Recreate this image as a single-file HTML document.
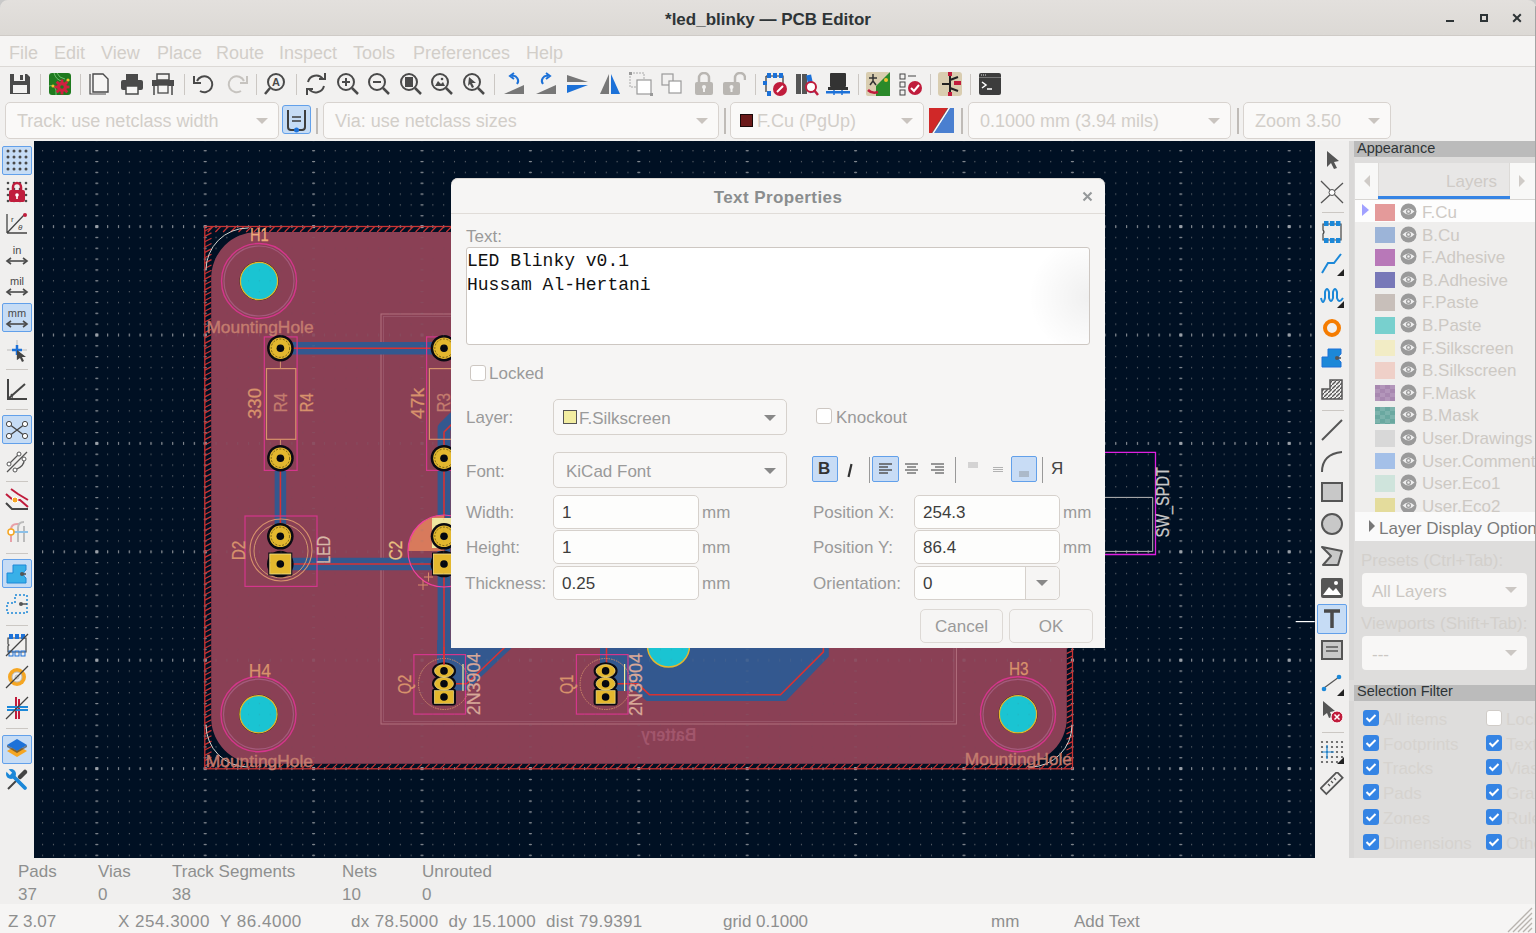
<!DOCTYPE html>
<html><head><meta charset="utf-8">
<style>
*{margin:0;padding:0;box-sizing:border-box}
html,body{width:1536px;height:933px;overflow:hidden}
body{background:#f2f1f0;font-family:"Liberation Sans",sans-serif;position:relative}
.a{position:absolute}
#title{left:0;top:0;width:1536px;height:36px;background:linear-gradient(#e3e0dd,#dcd9d5);border-bottom:1px solid #cfcbc7}
#title .t{left:0;width:1536px;top:10px;text-align:center;font-weight:bold;font-size:17px;color:#2e3436}
#menu{left:0;top:36px;width:1536px;height:31px;background:#f6f5f4;border-bottom:1px solid #dcd9d6}
#menu span{position:absolute;top:7px;font-size:18px;color:#d2cec9}
.cb{position:absolute;background:#faf9f8;border:1px solid #d8d3cf;border-radius:5px}
.cb .tx{position:absolute;left:11px;top:8px;font-size:18px;color:#d2cec9;white-space:nowrap}
.cb .ar{position:absolute;top:15px;width:0;height:0;border-left:6px solid transparent;border-right:6px solid transparent;border-top:6px solid #c9c4bf}
.sep{position:absolute;width:1.5px;background:#bfbbb7}
.hsep{position:absolute;height:1px;background:#cfcbc7}
.ib{position:absolute}
.hl{position:absolute;background:#c6dcf5;border:1px solid #62a0ea;border-radius:3px}
#ltb{left:0;top:141px;width:34px;height:717px;background:#f0efee}
#rtb{left:1315px;top:141px;width:34px;height:717px;background:#f0efee}
#status{left:0;top:858px;width:1536px;height:46px;background:#f0efee}
#status2{left:0;top:904px;width:1536px;height:29px;background:#f6f5f4}
.st{position:absolute;font-size:17px;color:#8e8f8f;white-space:nowrap}
</style></head><body>

<div id="title" class="a"><div class="t a">*led_blinky — PCB Editor</div>
<div class="a" style="left:1446px;top:19.7px;width:8px;height:2px;background:#2e3436"></div>
<div class="a" style="left:1480px;top:14px;width:8px;height:7.5px;border:2px solid #2e3436"></div>
<svg class="a" style="left:1512px;top:13px" width="10" height="10"><path d="M1.2 1.2 L8.8 8.8 M8.8 1.2 L1.2 8.8" stroke="#2e3436" stroke-width="2"/></svg>
</div>
<div id="menu" class="a">
<span style="left:9px">File</span><span style="left:54px">Edit</span><span style="left:101px">View</span><span style="left:157px">Place</span><span style="left:216px">Route</span><span style="left:279px">Inspect</span><span style="left:353px">Tools</span><span style="left:413px">Preferences</span><span style="left:526px">Help</span>
</div>
<div class="cb" style="left:5px;top:102px;width:274px;height:37px"><div class="tx">Track: use netclass width</div><div class="ar" style="left:250px"></div></div>
<div class="cb" style="left:323px;top:102px;width:396px;height:37px"><div class="tx">Via: use netclass sizes</div><div class="ar" style="left:372px"></div></div>
<div class="cb" style="left:730px;top:102px;width:194px;height:37px"><div class="tx" style="left:26px">F.Cu (PgUp)</div><div class="ar" style="left:170px"></div>
<div class="a" style="left:9px;top:11px;width:13px;height:13px;background:#6b1a1a;border:1px solid #1a0a0a"></div></div>
<div class="cb" style="left:968px;top:102px;width:263px;height:37px"><div class="tx">0.1000 mm (3.94 mils)</div><div class="ar" style="left:239px"></div></div>
<div class="cb" style="left:1243px;top:102px;width:148px;height:37px"><div class="tx">Zoom 3.50</div><div class="ar" style="left:124px"></div></div>
<div class="sep" style="left:316px;top:108px;height:26px"></div>
<div class="sep" style="left:724px;top:108px;height:26px"></div>
<div class="sep" style="left:961px;top:108px;height:26px"></div>
<div class="sep" style="left:1237px;top:108px;height:26px"></div>
<div class="hl" style="left:282px;top:105px;width:29px;height:29px"></div>
<svg class="a" style="left:282px;top:105px" width="29" height="29"><path d="M6 5 V22 Q6 25 9 25 H20 Q23 25 23 22 V5" fill="none" stroke="#3d3d3d" stroke-width="2"/><path d="M10 12 H19 M10 16 H19" stroke="#3d3d3d" stroke-width="1.5"/><circle cx="14.5" cy="25" r="2.5" fill="#1c71d8"/></svg>
<svg class="a" style="left:929px;top:108px" width="25" height="25"><path d="M0 0 H19 L3 25 H0 Z" fill="#d02828"/><path d="M21 0 H25 V25 H5 Z" fill="#4a7fd0"/><path d="M20 0 L4 25" stroke="#fff" stroke-width="1.2"/><path d="M19 0 L3 25" stroke="#333" stroke-width="0.5"/></svg>

<svg class="a" style="left:8px;top:72px" width="24" height="24" viewBox="0 0 24 24"><path d="M2 2 H19 L22 5 V22 H2 Z" fill="#4a4a4a"/><rect x="6" y="2" width="11" height="7" fill="#f2f1f0"/><rect x="12" y="3" width="3" height="5" fill="#4a4a4a"/><rect x="5" y="13" width="14" height="8" fill="#f2f1f0"/></svg>
<div class="a" style="left:40px;top:74px;width:1px;height:21px;background:#cbc7c3"></div>
<svg class="a" style="left:48px;top:72px" width="24" height="24" viewBox="0 0 24 24"><rect x="1" y="1" width="22" height="22" rx="3" fill="#1f7a1f"/><path d="M6 1 Q8 8 14 9 M9 1 Q11 6 17 7 M1 14 Q6 12 8 18 V23" stroke="#6cbf6c" stroke-width="1" fill="none"/><circle cx="5" cy="14" r="1.6" fill="#f0c030"/><circle cx="20" cy="8" r="1.6" fill="#f0c030"/><rect x="12.6" y="7.5" width="2.8" height="4" fill="#d02040" transform="rotate(0 14 15)"/><rect x="12.6" y="7.5" width="2.8" height="4" fill="#d02040" transform="rotate(45 14 15)"/><rect x="12.6" y="7.5" width="2.8" height="4" fill="#d02040" transform="rotate(90 14 15)"/><rect x="12.6" y="7.5" width="2.8" height="4" fill="#d02040" transform="rotate(135 14 15)"/><rect x="12.6" y="7.5" width="2.8" height="4" fill="#d02040" transform="rotate(180 14 15)"/><rect x="12.6" y="7.5" width="2.8" height="4" fill="#d02040" transform="rotate(225 14 15)"/><rect x="12.6" y="7.5" width="2.8" height="4" fill="#d02040" transform="rotate(270 14 15)"/><rect x="12.6" y="7.5" width="2.8" height="4" fill="#d02040" transform="rotate(315 14 15)"/><circle cx="14" cy="15" r="5" fill="#d02040"/><circle cx="14" cy="15" r="1.8" fill="#1f7a1f"/></svg>
<div class="a" style="left:80px;top:74px;width:1px;height:21px;background:#cbc7c3"></div>
<svg class="a" style="left:88px;top:72px" width="24" height="24" viewBox="0 0 24 24"><path d="M5 2 H15 L20 7 V20 H5 Z" fill="#f6f5f4" stroke="#4a4a4a" stroke-width="1.4"/><path d="M2 2 V22 H18" fill="none" stroke="#4a4a4a" stroke-width="1.2"/></svg>
<svg class="a" style="left:120px;top:72px" width="24" height="24" viewBox="0 0 24 24"><rect x="6" y="2" width="12" height="6" fill="#4a4a4a"/><rect x="1" y="8" width="22" height="10" rx="2" fill="#4a4a4a"/><rect x="6" y="14" width="12" height="8" fill="#f6f5f4" stroke="#4a4a4a" stroke-width="1.5"/></svg>
<svg class="a" style="left:151px;top:72px" width="24" height="24" viewBox="0 0 24 24"><rect x="6" y="2" width="12" height="6" fill="none" stroke="#4a4a4a" stroke-width="1.5"/><rect x="1" y="8" width="22" height="6" fill="#4a4a4a"/><path d="M3 14 V23 M21 14 V23" stroke="#4a4a4a" stroke-width="1.5"/><rect x="7" y="13" width="10" height="8" fill="#f6f5f4" stroke="#4a4a4a" stroke-width="1.3"/></svg>
<div class="a" style="left:184px;top:74px;width:1px;height:21px;background:#cbc7c3"></div>
<svg class="a" style="left:192px;top:72px" width="24" height="24" viewBox="0 0 24 24"><path d="M5 9 A8 8 0 1 1 8 19" fill="none" stroke="#4a4a4a" stroke-width="2"/><path d="M2 4 V11 H9" fill="none" stroke="#4a4a4a" stroke-width="2"/></svg>
<svg class="a" style="left:225px;top:72px" width="24" height="24" viewBox="0 0 24 24"><path d="M19 9 A8 8 0 1 0 16 19" fill="none" stroke="#c6c3bf" stroke-width="2"/><path d="M22 4 V11 H15" fill="none" stroke="#c6c3bf" stroke-width="2"/></svg>
<div class="a" style="left:256px;top:74px;width:1px;height:21px;background:#cbc7c3"></div>
<svg class="a" style="left:263px;top:72px" width="24" height="24" viewBox="0 0 24 24"><circle cx="13" cy="10" r="8" fill="none" stroke="#4a4a4a" stroke-width="2"/><path d="M7 16 L2 22" stroke="#4a4a4a" stroke-width="2.5"/><text x="13" y="14" text-anchor="middle" font-size="11" font-weight="bold" fill="#4a4a4a" font-family="Liberation Sans">A</text></svg>
<div class="a" style="left:296px;top:74px;width:1px;height:21px;background:#cbc7c3"></div>
<svg class="a" style="left:304px;top:72px" width="24" height="24" viewBox="0 0 24 24"><path d="M4 10 A8.5 8.5 0 0 1 19 7" fill="none" stroke="#4a4a4a" stroke-width="2"/><path d="M20 14 A8.5 8.5 0 0 1 5 17" fill="none" stroke="#4a4a4a" stroke-width="2"/><path d="M15 7 H21 V1" fill="none" stroke="#4a4a4a" stroke-width="2"/><path d="M9 17 H3 V23" fill="none" stroke="#4a4a4a" stroke-width="2"/></svg>
<svg class="a" style="left:336px;top:72px" width="24" height="24" viewBox="0 0 24 24"><circle cx="10" cy="10" r="8" fill="none" stroke="#4a4a4a" stroke-width="2"/><path d="M16 16 L22 22" stroke="#4a4a4a" stroke-width="2.5"/><path d="M6 10 H14 M10 6 V14" stroke="#4a4a4a" stroke-width="2"/></svg>
<svg class="a" style="left:367px;top:72px" width="24" height="24" viewBox="0 0 24 24"><circle cx="10" cy="10" r="8" fill="none" stroke="#4a4a4a" stroke-width="2"/><path d="M16 16 L22 22" stroke="#4a4a4a" stroke-width="2.5"/><path d="M6 10 H14" stroke="#4a4a4a" stroke-width="2"/></svg>
<svg class="a" style="left:399px;top:72px" width="24" height="24" viewBox="0 0 24 24"><circle cx="10" cy="10" r="8" fill="none" stroke="#4a4a4a" stroke-width="2"/><path d="M16 16 L22 22" stroke="#4a4a4a" stroke-width="2.5"/><rect x="6" y="5" width="8" height="10" fill="#4a4a4a"/></svg>
<svg class="a" style="left:430px;top:72px" width="24" height="24" viewBox="0 0 24 24"><circle cx="10" cy="10" r="8" fill="none" stroke="#4a4a4a" stroke-width="2"/><path d="M16 16 L22 22" stroke="#4a4a4a" stroke-width="2.5"/><path d="M5 14 L8 9 L11 12 L13 10 L15 14 Z" fill="#4a4a4a"/><circle cx="12" cy="7" r="1.3" fill="#4a4a4a"/></svg>
<svg class="a" style="left:462px;top:72px" width="24" height="24" viewBox="0 0 24 24"><circle cx="10" cy="10" r="8" fill="none" stroke="#4a4a4a" stroke-width="2"/><path d="M16 16 L22 22" stroke="#4a4a4a" stroke-width="2.5"/><path d="M7 5 L14 11 L10 11 L12 15 L10 16 L8 12 L6 14 Z" fill="#4a4a4a"/></svg>
<div class="a" style="left:494px;top:74px;width:1px;height:21px;background:#cbc7c3"></div>
<svg class="a" style="left:503px;top:72px" width="24" height="24" viewBox="0 0 24 24"><path d="M1 22 H21 V13 Z" fill="#777"/><path d="M14 12 A5 5 0 0 0 9 4" fill="none" stroke="#1c71d8" stroke-width="2"/><path d="M11 1 L7 4 L11 7" fill="none" stroke="#1c71d8" stroke-width="2"/></svg>
<svg class="a" style="left:535px;top:72px" width="24" height="24" viewBox="0 0 24 24"><path d="M3 22 H23 V13 Z" fill="#777" transform="translate(-2,0)"/><path d="M8 12 A5 5 0 0 1 13 4" fill="none" stroke="#1c71d8" stroke-width="2"/><path d="M11 1 L15 4 L11 7" fill="none" stroke="#1c71d8" stroke-width="2"/></svg>
<svg class="a" style="left:566px;top:72px" width="24" height="24" viewBox="0 0 24 24"><path d="M1 3 L22 10 H1 Z" fill="#777"/><path d="M1 21 L22 13 H1 Z" fill="#1c71d8"/></svg>
<svg class="a" style="left:598px;top:72px" width="24" height="24" viewBox="0 0 24 24"><path d="M11 2 L2 22 H11 Z" fill="#777"/><path d="M13 2 L22 22 H13 Z" fill="#1c71d8"/></svg>
<svg class="a" style="left:629px;top:72px" width="24" height="24" viewBox="0 0 24 24"><rect x="1" y="1" width="14" height="14" fill="none" stroke="#aaa" stroke-width="1" stroke-dasharray="2 1"/><rect x="8" y="8" width="14" height="14" fill="#fff" stroke="#999" stroke-width="1.2"/><rect x="0" y="0" width="3" height="3" fill="#999"/><rect x="21" y="21" width="3" height="3" fill="#999"/></svg>
<svg class="a" style="left:660px;top:72px" width="24" height="24" viewBox="0 0 24 24"><rect x="2" y="2" width="11" height="11" fill="none" stroke="#999" stroke-width="1.2"/><rect x="9" y="9" width="12" height="12" fill="#fff" stroke="#999" stroke-width="1.2"/></svg>
<svg class="a" style="left:692px;top:72px" width="24" height="24" viewBox="0 0 24 24"><path d="M7 10 V6 A5 5 0 0 1 17 6 V10" fill="none" stroke="#b9b6b2" stroke-width="2.5"/><rect x="3" y="10" width="18" height="13" rx="2" fill="#b9b6b2"/><circle cx="12" cy="15" r="2" fill="#f2f1f0"/><rect x="11" y="15" width="2" height="5" fill="#f2f1f0"/></svg>
<svg class="a" style="left:722px;top:72px" width="24" height="24" viewBox="0 0 24 24"><path d="M13 10 V6 A5 5 0 0 1 23 6 V8" fill="none" stroke="#b9b6b2" stroke-width="2.5"/><rect x="1" y="10" width="17" height="13" rx="2" fill="#b9b6b2"/><circle cx="9.5" cy="15" r="2" fill="#f2f1f0"/><rect x="8.5" y="15" width="2" height="5" fill="#f2f1f0"/></svg>
<div class="a" style="left:755px;top:74px;width:1px;height:21px;background:#cbc7c3"></div>
<svg class="a" style="left:763px;top:72px" width="24" height="24" viewBox="0 0 24 24"><path d="M3 4 V20 M3 4 H20 V12" fill="none" stroke="#333" stroke-width="1.2"/><rect x="4" y="1" width="4" height="5" fill="#1c71d8"/><rect x="10" y="1" width="4" height="5" fill="#1c71d8"/><rect x="16" y="1" width="4" height="5" fill="#1c71d8"/><rect x="0" y="9" width="4" height="4" fill="#1c71d8"/><rect x="4" y="19" width="4" height="5" fill="#1c71d8"/><circle cx="17" cy="17" r="7" fill="#c01c3c"/><path d="M14 20 L20 14" stroke="#fff" stroke-width="2"/></svg>
<svg class="a" style="left:795px;top:72px" width="24" height="24" viewBox="0 0 24 24"><rect x="1" y="2" width="5" height="20" fill="#555"/><rect x="7" y="2" width="5" height="20" fill="#555"/><rect x="13" y="3" width="5" height="18" fill="#1c71d8" transform="rotate(-12 15 12)"/><circle cx="16" cy="15" r="5" fill="#fff" stroke="#c01c3c" stroke-width="2"/><path d="M19 18 L23 23" stroke="#c01c3c" stroke-width="2.5"/></svg>
<svg class="a" style="left:826px;top:72px" width="24" height="24" viewBox="0 0 24 24"><rect x="4" y="1" width="16" height="14" rx="1" fill="#333"/><rect x="2" y="15" width="20" height="3" fill="#333"/><rect x="0" y="19" width="24" height="2.5" fill="#1c71d8"/><path d="M8 18 V23 M16 18 V23" stroke="#1c71d8" stroke-width="1.5"/></svg>
<div class="a" style="left:858px;top:74px;width:1px;height:21px;background:#cbc7c3"></div>
<svg class="a" style="left:866px;top:72px" width="24" height="24" viewBox="0 0 24 24"><rect x="0" y="0" width="24" height="24" rx="2" fill="#d9cdb0"/><path d="M10 14 L24 0 V24 H10 Z" fill="#2a8a2a"/><path d="M7 2 V9 M3 6 H11 M7 9 L4 13 M7 9 L10 13" stroke="#333" stroke-width="1.5"/><circle cx="20" cy="8" r="2" fill="#f0c030"/><path d="M2 18 Q6 22 12 20" stroke="#c01c3c" stroke-width="2.5" fill="none"/></svg>
<svg class="a" style="left:899px;top:72px" width="24" height="24" viewBox="0 0 24 24"><rect x="1" y="2" width="5" height="5" fill="none" stroke="#444" stroke-width="1"/><rect x="1" y="10" width="5" height="5" fill="none" stroke="#444" stroke-width="1"/><rect x="1" y="18" width="5" height="5" fill="none" stroke="#444" stroke-width="1"/><path d="M9 4 H17" stroke="#444" stroke-width="1"/><circle cx="16" cy="16" r="7" fill="#c01c3c"/><path d="M12 16 L15 19 L20 13" stroke="#fff" stroke-width="2" fill="none"/></svg>
<div class="a" style="left:930px;top:74px;width:1px;height:21px;background:#cbc7c3"></div>
<svg class="a" style="left:938px;top:72px" width="24" height="24" viewBox="0 0 24 24"><rect x="0" y="0" width="24" height="24" rx="3" fill="#d9cdb0"/><path d="M12 2 V22 M4 12 H12 M12 8 L20 5 M12 16 L20 19" stroke="#222" stroke-width="2"/><rect x="16" y="9" width="7" height="4" fill="#c01c3c"/><rect x="10" y="0" width="4" height="4" fill="#c01c3c"/><rect x="10" y="20" width="4" height="4" fill="#c01c3c"/></svg>
<div class="a" style="left:970px;top:74px;width:1px;height:21px;background:#cbc7c3"></div>
<svg class="a" style="left:978px;top:72px" width="24" height="24" viewBox="0 0 24 24"><rect x="1" y="1" width="22" height="22" rx="2" fill="#3d3d3d"/><rect x="1" y="5" width="22" height="1" fill="#777"/><path d="M3 3 h1 M5 3 h1 M7 3 h1" stroke="#ddd" stroke-width="1.2"/><path d="M4 10 L8 13 L4 16" stroke="#fff" stroke-width="1.5" fill="none"/><path d="M9 17 H14" stroke="#fff" stroke-width="1.5"/></svg>
<div id="ltb" class="a"></div>
<div class="a" style="left:2px;top:146px;width:30px;height:29px;background:#c6dcf5;border:1px solid #62a0ea;border-radius:2px"></div>
<svg class="a" style="left:5px;top:148px" width="24" height="24" viewBox="0 0 24 24"><circle cx="3" cy="3" r="1.5" fill="#4a4a4a"/><circle cx="3" cy="9" r="1.5" fill="#4a4a4a"/><circle cx="3" cy="15" r="1.5" fill="#4a4a4a"/><circle cx="3" cy="21" r="1.5" fill="#4a4a4a"/><circle cx="9" cy="3" r="1.5" fill="#4a4a4a"/><circle cx="9" cy="9" r="1.5" fill="#4a4a4a"/><circle cx="9" cy="15" r="1.5" fill="#4a4a4a"/><circle cx="9" cy="21" r="1.5" fill="#4a4a4a"/><circle cx="15" cy="3" r="1.5" fill="#4a4a4a"/><circle cx="15" cy="9" r="1.5" fill="#4a4a4a"/><circle cx="15" cy="15" r="1.5" fill="#4a4a4a"/><circle cx="15" cy="21" r="1.5" fill="#4a4a4a"/><circle cx="21" cy="3" r="1.5" fill="#4a4a4a"/><circle cx="21" cy="9" r="1.5" fill="#4a4a4a"/><circle cx="21" cy="15" r="1.5" fill="#4a4a4a"/><circle cx="21" cy="21" r="1.5" fill="#4a4a4a"/></svg>
<svg class="a" style="left:5px;top:180px" width="24" height="24" viewBox="0 0 24 24"><circle cx="3" cy="3" r="1.3" fill="#4a4a4a"/><circle cx="3" cy="9" r="1.3" fill="#4a4a4a"/><circle cx="3" cy="15" r="1.3" fill="#4a4a4a"/><circle cx="3" cy="21" r="1.3" fill="#4a4a4a"/><circle cx="9" cy="3" r="1.3" fill="#4a4a4a"/><circle cx="9" cy="9" r="1.3" fill="#4a4a4a"/><circle cx="9" cy="15" r="1.3" fill="#4a4a4a"/><circle cx="9" cy="21" r="1.3" fill="#4a4a4a"/><circle cx="15" cy="3" r="1.3" fill="#4a4a4a"/><circle cx="15" cy="9" r="1.3" fill="#4a4a4a"/><circle cx="15" cy="15" r="1.3" fill="#4a4a4a"/><circle cx="15" cy="21" r="1.3" fill="#4a4a4a"/><circle cx="21" cy="3" r="1.3" fill="#4a4a4a"/><circle cx="21" cy="9" r="1.3" fill="#4a4a4a"/><circle cx="21" cy="15" r="1.3" fill="#4a4a4a"/><circle cx="21" cy="21" r="1.3" fill="#4a4a4a"/><path d="M8 11 V7 A4 4 0 0 1 16 7 V11" fill="none" stroke="#c01c3c" stroke-width="2.5"/><rect x="4" y="10" width="16" height="12" rx="2" fill="#c01c3c"/><circle cx="12" cy="15" r="1.8" fill="#fff"/><rect x="11.2" y="15" width="1.6" height="4" fill="#fff"/></svg>
<svg class="a" style="left:5px;top:211px" width="24" height="24" viewBox="0 0 24 24"><path d="M2 22 V3 M2 22 H22 M2 22 L19 4" stroke="#444" stroke-width="1.3" fill="none"/><circle cx="20" cy="4" r="2" fill="#c01c3c"/><text x="6" y="11" font-size="8" fill="#444" font-family="Liberation Sans">r</text><text x="13" y="19" font-size="8" font-style="italic" fill="#444" font-family="Liberation Sans">θ</text></svg>
<svg class="a" style="left:5px;top:243px" width="24" height="24" viewBox="0 0 24 24"><text x="12" y="11" text-anchor="middle" font-size="11" fill="#4a4a4a" font-family="Liberation Sans">in</text><path d="M3 18 H21" stroke="#4a4a4a" stroke-width="1.6"/><path d="M6 15 L2 18 L6 21 M18 15 L22 18 L18 21" fill="none" stroke="#4a4a4a" stroke-width="1.6"/></svg>
<svg class="a" style="left:5px;top:274px" width="24" height="24" viewBox="0 0 24 24"><text x="12" y="11" text-anchor="middle" font-size="11" fill="#4a4a4a" font-family="Liberation Sans">mil</text><path d="M3 18 H21" stroke="#4a4a4a" stroke-width="1.6"/><path d="M6 15 L2 18 L6 21 M18 15 L22 18 L18 21" fill="none" stroke="#4a4a4a" stroke-width="1.6"/></svg>
<div class="a" style="left:2px;top:303px;width:30px;height:29px;background:#c6dcf5;border:1px solid #62a0ea;border-radius:2px"></div>
<svg class="a" style="left:5px;top:306px" width="24" height="24" viewBox="0 0 24 24"><text x="12" y="11" text-anchor="middle" font-size="11" fill="#4a4a4a" font-family="Liberation Sans">mm</text><path d="M3 18 H21" stroke="#4a4a4a" stroke-width="1.6"/><path d="M6 15 L2 18 L6 21 M18 15 L22 18 L18 21" fill="none" stroke="#4a4a4a" stroke-width="1.6"/></svg>
<svg class="a" style="left:5px;top:338px" width="24" height="24" viewBox="0 0 24 24"><path d="M12 2 V22 M2 12 H22" stroke="#bbb" stroke-width="1"/><path d="M12 7 V17 M7 12 H17" stroke="#1c71d8" stroke-width="2.5"/><path d="M12 12 L21 19 L17 19 L19 23 L17 24 L15 20 L12 22 Z" fill="#444"/></svg>
<div class="a" style="left:6px;top:369px;width:22px;height:1px;background:#cbc7c3"></div>
<svg class="a" style="left:5px;top:377px" width="24" height="24" viewBox="0 0 24 24"><path d="M3 2 V22 H22" stroke="#444" stroke-width="2" fill="none"/><path d="M3 22 L20 7" stroke="#444" stroke-width="2"/><path d="M7 22 A5 5 0 0 0 6 17" stroke="#444" stroke-width="1.3" fill="none"/></svg>
<div class="a" style="left:6px;top:409px;width:22px;height:1px;background:#cbc7c3"></div>
<div class="a" style="left:2px;top:415px;width:30px;height:29px;background:#c6dcf5;border:1px solid #62a0ea;border-radius:2px"></div>
<svg class="a" style="left:5px;top:418px" width="24" height="24" viewBox="0 0 24 24"><path d="M4 6 L20 18 M4 18 L20 6" stroke="#444" stroke-width="1.3"/><circle cx="4" cy="6" r="2.6" fill="#fff" stroke="#444" stroke-width="1"/><circle cx="20" cy="6" r="2.6" fill="#fff" stroke="#444" stroke-width="1"/><circle cx="4" cy="18" r="2.6" fill="#fff" stroke="#444" stroke-width="1"/><circle cx="20" cy="18" r="2.6" fill="#fff" stroke="#444" stroke-width="1"/></svg>
<svg class="a" style="left:5px;top:450px" width="24" height="24" viewBox="0 0 24 24"><path d="M2 22 L22 2" stroke="#555" stroke-width="1.2"/><path d="M4 14 L14 4 M10 20 Q20 16 19 9" stroke="#555" stroke-width="1.2" fill="none"/><circle cx="4" cy="14" r="2" fill="#fff" stroke="#555"/><circle cx="14" cy="4" r="2" fill="#fff" stroke="#555"/><circle cx="10" cy="20" r="2" fill="#fff" stroke="#555"/><circle cx="19" cy="9" r="2" fill="#fff" stroke="#555"/></svg>
<div class="a" style="left:6px;top:481px;width:22px;height:1px;background:#cbc7c3"></div>
<svg class="a" style="left:5px;top:488px" width="24" height="24" viewBox="0 0 24 24"><path d="M1 6 L8 12 H15 L23 19" stroke="#c01c3c" stroke-width="2" fill="none"/><path d="M6 1 L13 6 L23 12" stroke="#c01c3c" stroke-width="2" fill="none"/><path d="M1 15 L7 21 H23" stroke="#444" stroke-width="2" fill="none"/><circle cx="10" cy="12" r="3" fill="#f5a623" stroke="#fff" stroke-width="1"/></svg>
<svg class="a" style="left:5px;top:520px" width="24" height="24" viewBox="0 0 24 24"><path d="M6 22 V10 Q6 4 12 4 H14" stroke="#e8a0a8" stroke-width="2" fill="none"/><path d="M13 22 V8 Q13 2 19 2" stroke="#bbb" stroke-width="2" fill="none"/><path d="M19 22 V6" stroke="#bbb" stroke-width="2"/><path d="M6 12 H23" stroke="#8cc0e8" stroke-width="2"/><circle cx="6" cy="12" r="3" fill="#fff" stroke="#f5a623" stroke-width="1.5"/></svg>
<div class="a" style="left:6px;top:553px;width:22px;height:1px;background:#cbc7c3"></div>
<div class="a" style="left:2px;top:559px;width:30px;height:29px;background:#c6dcf5;border:1px solid #62a0ea;border-radius:2px"></div>
<svg class="a" style="left:5px;top:562px" width="24" height="24" viewBox="0 0 24 24"><path d="M2 11 H8 V3 H21 V8 A4.5 4.5 0 0 0 21 16 V21 H2 Z" fill="#38b0e8" stroke="#1c88d8" stroke-width="1"/><circle cx="17" cy="12" r="2" fill="#555"/><path d="M17 12 H21" stroke="#555" stroke-width="1.6"/></svg>
<svg class="a" style="left:5px;top:592px" width="24" height="24" viewBox="0 0 24 24"><path d="M2 11 H10 V3 H22 V21 H2 Z" fill="none" stroke="#1c88d8" stroke-width="1.5" stroke-dasharray="2 2"/><circle cx="16" cy="12" r="2" fill="#555"/><path d="M16 12 H22" stroke="#555" stroke-width="1.5"/></svg>
<div class="a" style="left:6px;top:625px;width:22px;height:1px;background:#cbc7c3"></div>
<svg class="a" style="left:5px;top:633px" width="24" height="24" viewBox="0 0 24 24"><path d="M3 5 H21 V19 H3 V13 Q5 12 3 11 Z" fill="none" stroke="#444" stroke-width="1.2"/><rect x="4" y="1" width="4" height="5" fill="#1c71d8"/><rect x="10" y="1" width="4" height="5" fill="#1c71d8"/><rect x="16" y="1" width="4" height="5" fill="#1c71d8"/><rect x="4" y="18" width="4" height="5" fill="none" stroke="#1c71d8"/><rect x="10" y="18" width="4" height="5" fill="none" stroke="#1c71d8"/><rect x="16" y="18" width="4" height="5" fill="none" stroke="#1c71d8"/><path d="M1 23 L23 1" stroke="#444" stroke-width="1.3"/></svg>
<svg class="a" style="left:5px;top:665px" width="24" height="24" viewBox="0 0 24 24"><circle cx="12" cy="12" r="9" fill="#f5a623"/><circle cx="12" cy="12" r="5" fill="#f0efee" stroke="#bbb"/><circle cx="12" cy="12" r="2" fill="none" stroke="#bbb"/><path d="M1 23 L23 1" stroke="#444" stroke-width="1.3"/></svg>
<svg class="a" style="left:5px;top:696px" width="24" height="24" viewBox="0 0 24 24"><path d="M11 1 V23 M14 3 V23" stroke="#c01c3c" stroke-width="2"/><path d="M2 11 H23 M2 14 H23" stroke="#1c88d8" stroke-width="2"/><path d="M1 23 L23 1" stroke="#444" stroke-width="1.3"/></svg>
<div class="a" style="left:6px;top:728px;width:22px;height:1px;background:#cbc7c3"></div>
<div class="a" style="left:2px;top:735px;width:30px;height:29px;background:#c6dcf5;border:1px solid #62a0ea;border-radius:2px"></div>
<svg class="a" style="left:5px;top:737px" width="24" height="24" viewBox="0 0 24 24"><path d="M12 8 L22 14 L12 20 L2 14 Z" fill="#f5a623"/><path d="M12 2 L22 8 L12 14 L2 8 Z" fill="#1c71d8"/><path d="M2 8 L12 14 L22 8 V10 L12 16 L2 10 Z" fill="#333" opacity="0.6"/></svg>
<svg class="a" style="left:5px;top:768px" width="24" height="24" viewBox="0 0 24 24"><path d="M3 21 L13 11" stroke="#444" stroke-width="2"/><path d="M15 9 L20 4" stroke="#444" stroke-width="4.5" stroke-linecap="round"/><path d="M8 8 L20 20" stroke="#1c88d8" stroke-width="3.8" stroke-linecap="round"/><circle cx="6" cy="6" r="5" fill="#1c88d8"/><path d="M1 1 L6 6" stroke="#f0efee" stroke-width="3.2"/></svg>
<div id="rtb" class="a"></div>
<svg class="a" style="left:1320px;top:148px" width="24" height="24" viewBox="0 0 24 24"><path d="M7 3 L19 13 L14 14 L17 20 L14 21 L11 15 L7 19 Z" fill="#555"/></svg>
<svg class="a" style="left:1320px;top:180px" width="24" height="24" viewBox="0 0 24 24"><path d="M1 1 L23 23 M23 3 L1 23" stroke="#555" stroke-width="1.3"/><circle cx="12" cy="12.5" r="3" fill="#fff" stroke="#555"/></svg>
<div class="a" style="left:1322px;top:212px;width:22px;height:1px;background:#cbc7c3"></div>
<svg class="a" style="left:1320px;top:220px" width="24" height="24" viewBox="0 0 24 24"><path d="M3 4 H21 V20 H3 V14 Q5 12 3 10 Z" fill="none" stroke="#444" stroke-width="1.2"/><rect x="4" y="1" width="4.5" height="5" fill="#1c88d8"/><rect x="4" y="18" width="4.5" height="5" fill="#1c88d8"/><rect x="10" y="1" width="4.5" height="5" fill="#1c88d8"/><rect x="10" y="18" width="4.5" height="5" fill="#1c88d8"/><rect x="16" y="1" width="4.5" height="5" fill="#1c88d8"/><rect x="16" y="18" width="4.5" height="5" fill="#1c88d8"/></svg>
<svg class="a" style="left:1320px;top:252px" width="24" height="24" viewBox="0 0 24 24"><path d="M2 21 L8 11 H14 L21 2" stroke="#1c88d8" stroke-width="2" fill="none"/><path d="M17 24 L24 17 V24 Z" fill="#222"/></svg>
<svg class="a" style="left:1320px;top:284px" width="24" height="24" viewBox="0 0 24 24"><path d="M1 14 Q3 22 5 14 V8 Q7 2 9 8 V14 Q11 20 13 14 V8 Q15 2 17 8 V14 Q19 20 23 14" stroke="#1c88d8" stroke-width="2" fill="none"/><path d="M17 24 L24 17 V24 Z" fill="#222"/></svg>
<svg class="a" style="left:1320px;top:316px" width="24" height="24" viewBox="0 0 24 24"><circle cx="12" cy="12" r="7" fill="none" stroke="#f57c00" stroke-width="4"/></svg>
<svg class="a" style="left:1320px;top:346px" width="24" height="24" viewBox="0 0 24 24"><path d="M2 11 H8 V3 H21 V8 A4.5 4.5 0 0 0 21 16 V21 H2 Z" fill="#1c88d8" stroke="#1c71d8" stroke-width="1"/><circle cx="17" cy="12" r="2" fill="#555"/><path d="M17 12 H21" stroke="#555" stroke-width="1.6"/></svg>
<svg class="a" style="left:1320px;top:377px" width="24" height="24" viewBox="0 0 24 24"><defs><pattern id="zh" patternUnits="userSpaceOnUse" width="4" height="4"><path d="M-1 5 L5 -1" stroke="#555" stroke-width="1.3"/></pattern></defs><path d="M2 12 H10 V3 H22 V22 H2 Z" fill="url(#zh)" stroke="#555" stroke-width="1.5"/></svg>
<div class="a" style="left:1322px;top:410px;width:22px;height:1px;background:#cbc7c3"></div>
<svg class="a" style="left:1320px;top:418px" width="24" height="24" viewBox="0 0 24 24"><path d="M2 22 L22 2" stroke="#555" stroke-width="2"/></svg>
<svg class="a" style="left:1320px;top:450px" width="24" height="24" viewBox="0 0 24 24"><path d="M2 22 Q2 4 22 2" stroke="#555" stroke-width="2" fill="none"/></svg>
<svg class="a" style="left:1320px;top:480px" width="24" height="24" viewBox="0 0 24 24"><rect x="2" y="3" width="20" height="18" fill="#c8c8c8" stroke="#555" stroke-width="2"/></svg>
<svg class="a" style="left:1320px;top:512px" width="24" height="24" viewBox="0 0 24 24"><circle cx="12" cy="12" r="10" fill="#c8c8c8" stroke="#555" stroke-width="2"/></svg>
<svg class="a" style="left:1320px;top:544px" width="24" height="24" viewBox="0 0 24 24"><path d="M2 3 L22 7 L18 21 L3 21 L11 12 Z" fill="#c8c8c8" stroke="#555" stroke-width="2" stroke-linejoin="round"/></svg>
<svg class="a" style="left:1320px;top:576px" width="24" height="24" viewBox="0 0 24 24"><rect x="1" y="2" width="22" height="20" rx="2" fill="#555"/><path d="M3 19 L9 11 L13 15 L16 12 L21 19 Z" fill="#fff"/><circle cx="16" cy="7" r="2" fill="#fff"/></svg>
<div class="a" style="left:1317px;top:604px;width:30px;height:30px;background:#c6dcf5;border:1px solid #62a0ea;border-radius:2px"></div>
<svg class="a" style="left:1320px;top:607px" width="24" height="24" viewBox="0 0 24 24"><path d="M4 4 H20 M12 4 V21" stroke="#4a4a4a" stroke-width="3.5"/></svg>
<svg class="a" style="left:1320px;top:638px" width="24" height="24" viewBox="0 0 24 24"><rect x="2" y="3" width="20" height="18" fill="#c8c8c8" stroke="#555" stroke-width="2"/><path d="M6 9 H18 M6 13 H18" stroke="#555" stroke-width="1.5"/></svg>
<svg class="a" style="left:1320px;top:672px" width="24" height="24" viewBox="0 0 24 24"><path d="M4 16 L19 5" stroke="#555" stroke-width="1.2"/><circle cx="4" cy="17" r="2.3" fill="#1c88d8"/><circle cx="19" cy="5" r="2.3" fill="#1c88d8"/><path d="M17 24 L24 17 V24 Z" fill="#222"/></svg>
<svg class="a" style="left:1320px;top:700px" width="24" height="24" viewBox="0 0 24 24"><path d="M3 1 L15 11 L10 12 L12 17 L9 18 L7 13 L3 16 Z" fill="#555"/><circle cx="17" cy="17" r="6" fill="#c01c3c" stroke="#fff" stroke-width="1"/><path d="M14.5 14.5 L19.5 19.5 M19.5 14.5 L14.5 19.5" stroke="#fff" stroke-width="1.5"/></svg>
<div class="a" style="left:1322px;top:732px;width:22px;height:1px;background:#cbc7c3"></div>
<svg class="a" style="left:1320px;top:740px" width="24" height="24" viewBox="0 0 24 24"><circle cx="2" cy="2" r="1.1" fill="#555"/><circle cx="2" cy="7" r="1.1" fill="#555"/><circle cx="2" cy="12" r="1.1" fill="#555"/><circle cx="2" cy="17" r="1.1" fill="#555"/><circle cx="2" cy="22" r="1.1" fill="#555"/><circle cx="7" cy="2" r="1.1" fill="#555"/><circle cx="7" cy="7" r="1.1" fill="#555"/><circle cx="7" cy="12" r="1.1" fill="#555"/><circle cx="7" cy="17" r="1.1" fill="#555"/><circle cx="7" cy="22" r="1.1" fill="#555"/><circle cx="12" cy="2" r="1.1" fill="#555"/><circle cx="12" cy="7" r="1.1" fill="#555"/><circle cx="12" cy="12" r="1.1" fill="#555"/><circle cx="12" cy="17" r="1.1" fill="#555"/><circle cx="12" cy="22" r="1.1" fill="#555"/><circle cx="17" cy="2" r="1.1" fill="#555"/><circle cx="17" cy="7" r="1.1" fill="#555"/><circle cx="17" cy="12" r="1.1" fill="#555"/><circle cx="17" cy="17" r="1.1" fill="#555"/><circle cx="17" cy="22" r="1.1" fill="#555"/><circle cx="22" cy="2" r="1.1" fill="#555"/><circle cx="22" cy="7" r="1.1" fill="#555"/><circle cx="22" cy="12" r="1.1" fill="#555"/><circle cx="22" cy="17" r="1.1" fill="#555"/><circle cx="22" cy="22" r="1.1" fill="#555"/><path d="M7 5 V19 M2 12 H14" stroke="#1c88d8" stroke-width="1.2"/><path d="M17 24 L24 17 V24 Z" fill="#222"/></svg>
<svg class="a" style="left:1320px;top:772px" width="24" height="24" viewBox="0 0 24 24"><rect x="1" y="7" width="23" height="8" transform="rotate(-45 12 12)" fill="none" stroke="#555" stroke-width="1.8"/><path d="M8 12 L10 14 M11 9 L13 11 M14 6 L16 8" stroke="#555" stroke-width="1.2"/></svg>
<svg class="a" style="left:34px;top:141px" width="1281" height="717" viewBox="34 141 1281 717">
<defs>
<pattern id="gmin" patternUnits="userSpaceOnUse" x="42.1" y="150.07" width="10.84" height="10.84"><rect x="0" y="0" width="1" height="1.3" fill="#5c626a"/></pattern>
<pattern id="gmajc" patternUnits="userSpaceOnUse" x="95.3" y="150.17" width="108.4" height="10.84"><rect x="0" y="0" width="3" height="1.1" fill="#80868e"/></pattern>
<pattern id="gmajr" patternUnits="userSpaceOnUse" x="42.05" y="225.1" width="10.84" height="108.4"><rect x="0" y="0" width="1.1" height="3" fill="#80868e"/></pattern>
<pattern id="gmajx" patternUnits="userSpaceOnUse" x="95.3" y="225.1" width="108.4" height="108.4"><rect x="0" y="0" width="3" height="3" fill="#9aa0a8"/></pattern>
<pattern id="hatch" patternUnits="userSpaceOnUse" x="0" y="0" width="10.85" height="10.85"><path d="M-1 11.85 L11.85 -1" stroke="#c83434" stroke-width="1.6"/></pattern>
</defs>
<rect x="34" y="141" width="1281" height="717" fill="#001023"/>
<g id="grid"><rect x="34" y="141" width="1281" height="717" fill="url(#gmin)"/><rect x="34" y="141" width="1281" height="717" fill="url(#gmajc)"/><rect x="34" y="141" width="1281" height="717" fill="url(#gmajr)"/><rect x="34" y="141" width="1281" height="717" fill="url(#gmajx)"/></g>
<path d="M204.8 231.00 L211.5 227.50 M1072.5 228.00 L1066.5 231.00 M204.8 236.35 L211.5 232.85 M1072.5 233.35 L1066.5 236.35 M204.8 241.70 L211.5 238.20 M1072.5 238.70 L1066.5 241.70 M204.8 247.05 L211.5 243.55 M1072.5 244.05 L1066.5 247.05 M204.8 252.40 L211.5 248.90 M1072.5 249.40 L1066.5 252.40 M204.8 257.75 L211.5 254.25 M1072.5 254.75 L1066.5 257.75 M204.8 263.10 L211.5 259.60 M1072.5 260.10 L1066.5 263.10 M204.8 268.45 L211.5 264.95 M1072.5 265.45 L1066.5 268.45 M204.8 273.80 L211.5 270.30 M1072.5 270.80 L1066.5 273.80 M204.8 279.15 L211.5 275.65 M1072.5 276.15 L1066.5 279.15 M204.8 284.50 L211.5 281.00 M1072.5 281.50 L1066.5 284.50 M204.8 289.85 L211.5 286.35 M1072.5 286.85 L1066.5 289.85 M204.8 295.20 L211.5 291.70 M1072.5 292.20 L1066.5 295.20 M204.8 300.55 L211.5 297.05 M1072.5 297.55 L1066.5 300.55 M204.8 305.90 L211.5 302.40 M1072.5 302.90 L1066.5 305.90 M204.8 311.25 L211.5 307.75 M1072.5 308.25 L1066.5 311.25 M204.8 316.60 L211.5 313.10 M1072.5 313.60 L1066.5 316.60 M204.8 321.95 L211.5 318.45 M1072.5 318.95 L1066.5 321.95 M204.8 327.30 L211.5 323.80 M1072.5 324.30 L1066.5 327.30 M204.8 332.65 L211.5 329.15 M1072.5 329.65 L1066.5 332.65 M204.8 338.00 L211.5 334.50 M1072.5 335.00 L1066.5 338.00 M204.8 343.35 L211.5 339.85 M1072.5 340.35 L1066.5 343.35 M204.8 348.70 L211.5 345.20 M1072.5 345.70 L1066.5 348.70 M204.8 354.05 L211.5 350.55 M1072.5 351.05 L1066.5 354.05 M204.8 359.40 L211.5 355.90 M1072.5 356.40 L1066.5 359.40 M204.8 364.75 L211.5 361.25 M1072.5 361.75 L1066.5 364.75 M204.8 370.10 L211.5 366.60 M1072.5 367.10 L1066.5 370.10 M204.8 375.45 L211.5 371.95 M1072.5 372.45 L1066.5 375.45 M204.8 380.80 L211.5 377.30 M1072.5 377.80 L1066.5 380.80 M204.8 386.15 L211.5 382.65 M1072.5 383.15 L1066.5 386.15 M204.8 391.50 L211.5 388.00 M1072.5 388.50 L1066.5 391.50 M204.8 396.85 L211.5 393.35 M1072.5 393.85 L1066.5 396.85 M204.8 402.20 L211.5 398.70 M1072.5 399.20 L1066.5 402.20 M204.8 407.55 L211.5 404.05 M1072.5 404.55 L1066.5 407.55 M204.8 412.90 L211.5 409.40 M1072.5 409.90 L1066.5 412.90 M204.8 418.25 L211.5 414.75 M1072.5 415.25 L1066.5 418.25 M204.8 423.60 L211.5 420.10 M1072.5 420.60 L1066.5 423.60 M204.8 428.95 L211.5 425.45 M1072.5 425.95 L1066.5 428.95 M204.8 434.30 L211.5 430.80 M1072.5 431.30 L1066.5 434.30 M204.8 439.65 L211.5 436.15 M1072.5 436.65 L1066.5 439.65 M204.8 445.00 L211.5 441.50 M1072.5 442.00 L1066.5 445.00 M204.8 450.35 L211.5 446.85 M1072.5 447.35 L1066.5 450.35 M204.8 455.70 L211.5 452.20 M1072.5 452.70 L1066.5 455.70 M204.8 461.05 L211.5 457.55 M1072.5 458.05 L1066.5 461.05 M204.8 466.40 L211.5 462.90 M1072.5 463.40 L1066.5 466.40 M204.8 471.75 L211.5 468.25 M1072.5 468.75 L1066.5 471.75 M204.8 477.10 L211.5 473.60 M1072.5 474.10 L1066.5 477.10 M204.8 482.45 L211.5 478.95 M1072.5 479.45 L1066.5 482.45 M204.8 487.80 L211.5 484.30 M1072.5 484.80 L1066.5 487.80 M204.8 493.15 L211.5 489.65 M1072.5 490.15 L1066.5 493.15 M204.8 498.50 L211.5 495.00 M1072.5 495.50 L1066.5 498.50 M204.8 503.85 L211.5 500.35 M1072.5 500.85 L1066.5 503.85 M204.8 509.20 L211.5 505.70 M1072.5 506.20 L1066.5 509.20 M204.8 514.55 L211.5 511.05 M1072.5 511.55 L1066.5 514.55 M204.8 519.90 L211.5 516.40 M1072.5 516.90 L1066.5 519.90 M204.8 525.25 L211.5 521.75 M1072.5 522.25 L1066.5 525.25 M204.8 530.60 L211.5 527.10 M1072.5 527.60 L1066.5 530.60 M204.8 535.95 L211.5 532.45 M1072.5 532.95 L1066.5 535.95 M204.8 541.30 L211.5 537.80 M1072.5 538.30 L1066.5 541.30 M204.8 546.65 L211.5 543.15 M1072.5 543.65 L1066.5 546.65 M204.8 552.00 L211.5 548.50 M1072.5 549.00 L1066.5 552.00 M204.8 557.35 L211.5 553.85 M1072.5 554.35 L1066.5 557.35 M204.8 562.70 L211.5 559.20 M1072.5 559.70 L1066.5 562.70 M204.8 568.05 L211.5 564.55 M1072.5 565.05 L1066.5 568.05 M204.8 573.40 L211.5 569.90 M1072.5 570.40 L1066.5 573.40 M204.8 578.75 L211.5 575.25 M1072.5 575.75 L1066.5 578.75 M204.8 584.10 L211.5 580.60 M1072.5 581.10 L1066.5 584.10 M204.8 589.45 L211.5 585.95 M1072.5 586.45 L1066.5 589.45 M204.8 594.80 L211.5 591.30 M1072.5 591.80 L1066.5 594.80 M204.8 600.15 L211.5 596.65 M1072.5 597.15 L1066.5 600.15 M204.8 605.50 L211.5 602.00 M1072.5 602.50 L1066.5 605.50 M204.8 610.85 L211.5 607.35 M1072.5 607.85 L1066.5 610.85 M204.8 616.20 L211.5 612.70 M1072.5 613.20 L1066.5 616.20 M204.8 621.55 L211.5 618.05 M1072.5 618.55 L1066.5 621.55 M204.8 626.90 L211.5 623.40 M1072.5 623.90 L1066.5 626.90 M204.8 632.25 L211.5 628.75 M1072.5 629.25 L1066.5 632.25 M204.8 637.60 L211.5 634.10 M1072.5 634.60 L1066.5 637.60 M204.8 642.95 L211.5 639.45 M1072.5 639.95 L1066.5 642.95 M204.8 648.30 L211.5 644.80 M1072.5 645.30 L1066.5 648.30 M204.8 653.65 L211.5 650.15 M1072.5 650.65 L1066.5 653.65 M204.8 659.00 L211.5 655.50 M1072.5 656.00 L1066.5 659.00 M204.8 664.35 L211.5 660.85 M1072.5 661.35 L1066.5 664.35 M204.8 669.70 L211.5 666.20 M1072.5 666.70 L1066.5 669.70 M204.8 675.05 L211.5 671.55 M1072.5 672.05 L1066.5 675.05 M204.8 680.40 L211.5 676.90 M1072.5 677.40 L1066.5 680.40 M204.8 685.75 L211.5 682.25 M1072.5 682.75 L1066.5 685.75 M204.8 691.10 L211.5 687.60 M1072.5 688.10 L1066.5 691.10 M204.8 696.45 L211.5 692.95 M1072.5 693.45 L1066.5 696.45 M204.8 701.80 L211.5 698.30 M1072.5 698.80 L1066.5 701.80 M204.8 707.15 L211.5 703.65 M1072.5 704.15 L1066.5 707.15 M204.8 712.50 L211.5 709.00 M1072.5 709.50 L1066.5 712.50 M204.8 717.85 L211.5 714.35 M1072.5 714.85 L1066.5 717.85 M204.8 723.20 L211.5 719.70 M1072.5 720.20 L1066.5 723.20 M204.8 728.55 L211.5 725.05 M1072.5 725.55 L1066.5 728.55 M204.8 733.90 L211.5 730.40 M1072.5 730.90 L1066.5 733.90 M204.8 739.25 L211.5 735.75 M1072.5 736.25 L1066.5 739.25 M204.8 744.60 L211.5 741.10 M1072.5 741.60 L1066.5 744.60 M204.8 749.95 L211.5 746.45 M1072.5 746.95 L1066.5 749.95 M204.8 755.30 L211.5 751.80 M1072.5 752.30 L1066.5 755.30 M204.8 760.65 L211.5 757.15 M1072.5 757.65 L1066.5 760.65 M204.8 766.00 L211.5 762.50 M1072.5 763.00 L1066.5 766.00 M213.00 226.5 L207.70 232 M209.00 768.8 L214.00 763.8 M220.70 226.5 L215.40 232 M216.70 768.8 L221.70 763.8 M228.40 226.5 L223.10 232 M224.40 768.8 L229.40 763.8 M236.10 226.5 L230.80 232 M232.10 768.8 L237.10 763.8 M243.80 226.5 L238.50 232 M239.80 768.8 L244.80 763.8 M251.50 226.5 L246.20 232 M247.50 768.8 L252.50 763.8 M259.20 226.5 L253.90 232 M255.20 768.8 L260.20 763.8 M266.90 226.5 L261.60 232 M262.90 768.8 L267.90 763.8 M274.60 226.5 L269.30 232 M270.60 768.8 L275.60 763.8 M282.30 226.5 L277.00 232 M278.30 768.8 L283.30 763.8 M290.00 226.5 L284.70 232 M286.00 768.8 L291.00 763.8 M297.70 226.5 L292.40 232 M293.70 768.8 L298.70 763.8 M305.40 226.5 L300.10 232 M301.40 768.8 L306.40 763.8 M313.10 226.5 L307.80 232 M309.10 768.8 L314.10 763.8 M320.80 226.5 L315.50 232 M316.80 768.8 L321.80 763.8 M328.50 226.5 L323.20 232 M324.50 768.8 L329.50 763.8 M336.20 226.5 L330.90 232 M332.20 768.8 L337.20 763.8 M343.90 226.5 L338.60 232 M339.90 768.8 L344.90 763.8 M351.60 226.5 L346.30 232 M347.60 768.8 L352.60 763.8 M359.30 226.5 L354.00 232 M355.30 768.8 L360.30 763.8 M367.00 226.5 L361.70 232 M363.00 768.8 L368.00 763.8 M374.70 226.5 L369.40 232 M370.70 768.8 L375.70 763.8 M382.40 226.5 L377.10 232 M378.40 768.8 L383.40 763.8 M390.10 226.5 L384.80 232 M386.10 768.8 L391.10 763.8 M397.80 226.5 L392.50 232 M393.80 768.8 L398.80 763.8 M405.50 226.5 L400.20 232 M401.50 768.8 L406.50 763.8 M413.20 226.5 L407.90 232 M409.20 768.8 L414.20 763.8 M420.90 226.5 L415.60 232 M416.90 768.8 L421.90 763.8 M428.60 226.5 L423.30 232 M424.60 768.8 L429.60 763.8 M436.30 226.5 L431.00 232 M432.30 768.8 L437.30 763.8 M444.00 226.5 L438.70 232 M440.00 768.8 L445.00 763.8 M451.70 226.5 L446.40 232 M447.70 768.8 L452.70 763.8 M459.40 226.5 L454.10 232 M455.40 768.8 L460.40 763.8 M467.10 226.5 L461.80 232 M463.10 768.8 L468.10 763.8 M474.80 226.5 L469.50 232 M470.80 768.8 L475.80 763.8 M482.50 226.5 L477.20 232 M478.50 768.8 L483.50 763.8 M490.20 226.5 L484.90 232 M486.20 768.8 L491.20 763.8 M497.90 226.5 L492.60 232 M493.90 768.8 L498.90 763.8 M505.60 226.5 L500.30 232 M501.60 768.8 L506.60 763.8 M513.30 226.5 L508.00 232 M509.30 768.8 L514.30 763.8 M521.00 226.5 L515.70 232 M517.00 768.8 L522.00 763.8 M528.70 226.5 L523.40 232 M524.70 768.8 L529.70 763.8 M536.40 226.5 L531.10 232 M532.40 768.8 L537.40 763.8 M544.10 226.5 L538.80 232 M540.10 768.8 L545.10 763.8 M551.80 226.5 L546.50 232 M547.80 768.8 L552.80 763.8 M559.50 226.5 L554.20 232 M555.50 768.8 L560.50 763.8 M567.20 226.5 L561.90 232 M563.20 768.8 L568.20 763.8 M574.90 226.5 L569.60 232 M570.90 768.8 L575.90 763.8 M582.60 226.5 L577.30 232 M578.60 768.8 L583.60 763.8 M590.30 226.5 L585.00 232 M586.30 768.8 L591.30 763.8 M598.00 226.5 L592.70 232 M594.00 768.8 L599.00 763.8 M605.70 226.5 L600.40 232 M601.70 768.8 L606.70 763.8 M613.40 226.5 L608.10 232 M609.40 768.8 L614.40 763.8 M621.10 226.5 L615.80 232 M617.10 768.8 L622.10 763.8 M628.80 226.5 L623.50 232 M624.80 768.8 L629.80 763.8 M636.50 226.5 L631.20 232 M632.50 768.8 L637.50 763.8 M644.20 226.5 L638.90 232 M640.20 768.8 L645.20 763.8 M651.90 226.5 L646.60 232 M647.90 768.8 L652.90 763.8 M659.60 226.5 L654.30 232 M655.60 768.8 L660.60 763.8 M667.30 226.5 L662.00 232 M663.30 768.8 L668.30 763.8 M675.00 226.5 L669.70 232 M671.00 768.8 L676.00 763.8 M682.70 226.5 L677.40 232 M678.70 768.8 L683.70 763.8 M690.40 226.5 L685.10 232 M686.40 768.8 L691.40 763.8 M698.10 226.5 L692.80 232 M694.10 768.8 L699.10 763.8 M705.80 226.5 L700.50 232 M701.80 768.8 L706.80 763.8 M713.50 226.5 L708.20 232 M709.50 768.8 L714.50 763.8 M721.20 226.5 L715.90 232 M717.20 768.8 L722.20 763.8 M728.90 226.5 L723.60 232 M724.90 768.8 L729.90 763.8 M736.60 226.5 L731.30 232 M732.60 768.8 L737.60 763.8 M744.30 226.5 L739.00 232 M740.30 768.8 L745.30 763.8 M752.00 226.5 L746.70 232 M748.00 768.8 L753.00 763.8 M759.70 226.5 L754.40 232 M755.70 768.8 L760.70 763.8 M767.40 226.5 L762.10 232 M763.40 768.8 L768.40 763.8 M775.10 226.5 L769.80 232 M771.10 768.8 L776.10 763.8 M782.80 226.5 L777.50 232 M778.80 768.8 L783.80 763.8 M790.50 226.5 L785.20 232 M786.50 768.8 L791.50 763.8 M798.20 226.5 L792.90 232 M794.20 768.8 L799.20 763.8 M805.90 226.5 L800.60 232 M801.90 768.8 L806.90 763.8 M813.60 226.5 L808.30 232 M809.60 768.8 L814.60 763.8 M821.30 226.5 L816.00 232 M817.30 768.8 L822.30 763.8 M829.00 226.5 L823.70 232 M825.00 768.8 L830.00 763.8 M836.70 226.5 L831.40 232 M832.70 768.8 L837.70 763.8 M844.40 226.5 L839.10 232 M840.40 768.8 L845.40 763.8 M852.10 226.5 L846.80 232 M848.10 768.8 L853.10 763.8 M859.80 226.5 L854.50 232 M855.80 768.8 L860.80 763.8 M867.50 226.5 L862.20 232 M863.50 768.8 L868.50 763.8 M875.20 226.5 L869.90 232 M871.20 768.8 L876.20 763.8 M882.90 226.5 L877.60 232 M878.90 768.8 L883.90 763.8 M890.60 226.5 L885.30 232 M886.60 768.8 L891.60 763.8 M898.30 226.5 L893.00 232 M894.30 768.8 L899.30 763.8 M906.00 226.5 L900.70 232 M902.00 768.8 L907.00 763.8 M913.70 226.5 L908.40 232 M909.70 768.8 L914.70 763.8 M921.40 226.5 L916.10 232 M917.40 768.8 L922.40 763.8 M929.10 226.5 L923.80 232 M925.10 768.8 L930.10 763.8 M936.80 226.5 L931.50 232 M932.80 768.8 L937.80 763.8 M944.50 226.5 L939.20 232 M940.50 768.8 L945.50 763.8 M952.20 226.5 L946.90 232 M948.20 768.8 L953.20 763.8 M959.90 226.5 L954.60 232 M955.90 768.8 L960.90 763.8 M967.60 226.5 L962.30 232 M963.60 768.8 L968.60 763.8 M975.30 226.5 L970.00 232 M971.30 768.8 L976.30 763.8 M983.00 226.5 L977.70 232 M979.00 768.8 L984.00 763.8 M990.70 226.5 L985.40 232 M986.70 768.8 L991.70 763.8 M998.40 226.5 L993.10 232 M994.40 768.8 L999.40 763.8 M1006.10 226.5 L1000.80 232 M1002.10 768.8 L1007.10 763.8 M1013.80 226.5 L1008.50 232 M1009.80 768.8 L1014.80 763.8 M1021.50 226.5 L1016.20 232 M1017.50 768.8 L1022.50 763.8 M1029.20 226.5 L1023.90 232 M1025.20 768.8 L1030.20 763.8 M1036.90 226.5 L1031.60 232 M1032.90 768.8 L1037.90 763.8 M1044.60 226.5 L1039.30 232 M1040.60 768.8 L1045.60 763.8 M1052.30 226.5 L1047.00 232 M1048.30 768.8 L1053.30 763.8 M1060.00 226.5 L1054.70 232 M1056.00 768.8 L1061.00 763.8 M1067.70 226.5 L1062.40 232 M1063.70 768.8 L1068.70 763.8" stroke="#c83434" stroke-width="1.2" fill="none"/>
<rect x="204.8" y="226.5" width="867.7" height="542.3" fill="none" stroke="#c83434" stroke-width="1.3"/>
<path d="M257 232 H1066.8 V717.8 A46 46 0 0 1 1020.8 763.8 H257 A46 46 0 0 1 211.2 717.8 V278 A46 46 0 0 1 257 232 Z" fill="#8a4055"/>
<path d="M206 270 A42 42 0 0 1 248 228" fill="none" stroke="#d0d2cd" stroke-width="1"/>
<path d="M206 725 A42 42 0 0 0 248 767" fill="none" stroke="#d0d2cd" stroke-width="1"/>
<path d="M1030 767 A42 42 0 0 0 1072 725" fill="none" stroke="#d0d2cd" stroke-width="1"/>
<rect x="381" y="314" width="575.4" height="410" fill="none" stroke="#b2707f" stroke-width="1"/>
<rect x="383.5" y="316.5" width="570.4" height="405" fill="none" stroke="#9c5a6e" stroke-width="0.8"/>
<path d="M437.1 640 H520 L466.7 690.6 H437.1 Z" fill="#33588f"/>
<path d="M600 640 H828.8 V656.4 L786 701 H646.6 L635.6 691 H600 Z" fill="#33588f"/>
<path d="M280.4 348.2 H444" fill="none" stroke="#33588f" stroke-width="12.5" stroke-linejoin="round"/>
<path d="M280.4 458.2 V536.3" fill="none" stroke="#33588f" stroke-width="11.5" stroke-linejoin="round"/>
<path d="M280.4 564 H444" fill="none" stroke="#33588f" stroke-width="12.5" stroke-linejoin="round"/>
<path d="M455 417 L444 428 V700" fill="none" stroke="#33588f" stroke-width="12.8" stroke-linejoin="round"/>
<circle cx="668.5" cy="646" r="21" fill="#1ac4d2" stroke="#e3b72e" stroke-width="1.5"/>
<path d="M280.4 348.2 H444" fill="none" stroke="#d83232" stroke-width="1.6"/>
<path d="M280.4 458.2 V536.3" fill="none" stroke="#d83232" stroke-width="1.6"/>
<path d="M280.4 564 H444" fill="none" stroke="#d83232" stroke-width="1.6"/>
<path d="M455 421 L444 432 V700" fill="none" stroke="#d83232" stroke-width="1.6"/>
<path d="M444 683.8 H466.7 L505 647" fill="none" stroke="#d83232" stroke-width="1.6"/>
<path d="M606.5 647 V671" fill="none" stroke="#d83232" stroke-width="1.6"/>
<path d="M605.6 683.8 H637.8 L649.3 694.7 H780.5 L823.4 651.8 V647" fill="none" stroke="#d83232" stroke-width="1.6"/>
<circle cx="259" cy="281" r="37.5" fill="none" stroke="#d4368c" stroke-width="1.4"/>
<circle cx="259" cy="281" r="35" fill="none" stroke="#a45a7c" stroke-width="1.2"/>
<circle cx="259" cy="281" r="19.5" fill="#1a1410"/>
<circle cx="259" cy="281" r="18.6" fill="#1ac4d2" stroke="#e3b72e" stroke-width="1.3"/>
<circle cx="258.5" cy="714.2" r="37.5" fill="none" stroke="#d4368c" stroke-width="1.4"/>
<circle cx="258.5" cy="714.2" r="35" fill="none" stroke="#a45a7c" stroke-width="1.2"/>
<circle cx="258.5" cy="714.2" r="19.5" fill="#1a1410"/>
<circle cx="258.5" cy="714.2" r="18.6" fill="#1ac4d2" stroke="#e3b72e" stroke-width="1.3"/>
<circle cx="1018" cy="714.3" r="37.5" fill="none" stroke="#d4368c" stroke-width="1.4"/>
<circle cx="1018" cy="714.3" r="35" fill="none" stroke="#a45a7c" stroke-width="1.2"/>
<circle cx="1018" cy="714.3" r="19.5" fill="#1a1410"/>
<circle cx="1018" cy="714.3" r="18.6" fill="#1ac4d2" stroke="#e3b72e" stroke-width="1.3"/>
<rect x="264.3" y="336.9" width="32.8" height="133.5" fill="none" stroke="#d4368c" stroke-width="1.2"/>
<rect x="266.5" y="368.6" width="29.3" height="70.7" fill="none" stroke="#d8926c" stroke-width="1.2"/>
<path d="M280.4 361 V368.6 M280.4 439.3 V446" stroke="#d8926c" stroke-width="1"/>
<circle cx="280.4" cy="348.2" r="13.3" fill="#0a0a12"/>
<circle cx="280.4" cy="348.2" r="10.8" fill="#e3b72e"/>
<circle cx="280.4" cy="348.2" r="9.200000000000001" fill="none" stroke="#5a4a10" stroke-width="0.8" stroke-dasharray="2 1.5"/>
<circle cx="280.4" cy="348.2" r="3.8" fill="#050810"/>
<circle cx="280.4" cy="458.2" r="13.3" fill="#0a0a12"/>
<circle cx="280.4" cy="458.2" r="10.8" fill="#e3b72e"/>
<circle cx="280.4" cy="458.2" r="9.200000000000001" fill="none" stroke="#5a4a10" stroke-width="0.8" stroke-dasharray="2 1.5"/>
<circle cx="280.4" cy="458.2" r="3.8" fill="#050810"/>
<rect x="426.6" y="336.9" width="35" height="133.5" fill="none" stroke="#d4368c" stroke-width="1.2"/>
<rect x="429.4" y="368.6" width="29.3" height="70.7" fill="none" stroke="#d8926c" stroke-width="1.2"/>
<circle cx="444" cy="348.2" r="13.3" fill="#0a0a12"/>
<circle cx="444" cy="348.2" r="10.8" fill="#e3b72e"/>
<circle cx="444" cy="348.2" r="9.200000000000001" fill="none" stroke="#5a4a10" stroke-width="0.8" stroke-dasharray="2 1.5"/>
<circle cx="444" cy="348.2" r="3.8" fill="#050810"/>
<circle cx="444" cy="458.2" r="13.3" fill="#0a0a12"/>
<circle cx="444" cy="458.2" r="10.8" fill="#e3b72e"/>
<circle cx="444" cy="458.2" r="9.200000000000001" fill="none" stroke="#5a4a10" stroke-width="0.8" stroke-dasharray="2 1.5"/>
<circle cx="444" cy="458.2" r="3.8" fill="#050810"/>
<rect x="245" y="516" width="72" height="70.4" fill="none" stroke="#d4368c" stroke-width="1.2"/>
<circle cx="281" cy="550" r="31" fill="none" stroke="#d8926c" stroke-width="1.1"/>
<circle cx="281" cy="551" r="27" fill="none" stroke="#d9a070" stroke-width="0.9"/>
<circle cx="280.3" cy="536.3" r="13.3" fill="#0a0a12"/>
<circle cx="280.3" cy="536.3" r="10.8" fill="#e3b72e"/>
<circle cx="280.3" cy="536.3" r="9.200000000000001" fill="none" stroke="#5a4a10" stroke-width="0.8" stroke-dasharray="2 1.5"/>
<circle cx="280.3" cy="536.3" r="3.8" fill="#050810"/>
<circle cx="280.3" cy="564" r="13.3" fill="#0a0a12"/>
<rect x="268.3" y="552.5" width="24" height="23" fill="#0a0a12"/>
<rect x="269.8" y="554" width="21" height="20" fill="#e3b72e" stroke="#f5e08a" stroke-width="0.8"/>
<circle cx="280.3" cy="564" r="3.8" fill="#050810"/>
<path d="M444 515 A36 36 0 0 0 408 551 H444 Z" fill="#d87a5c"/>
<circle cx="444" cy="551" r="36" fill="none" stroke="#f040a0" stroke-width="1.2"/>
<path d="M418 585 h10 M423 580 v10 M424 577 h9 M428.5 572.5 v9" stroke="#d88a6a" stroke-width="1"/>
<rect x="432" y="518" width="19" height="30" fill="#f0e6a0"/>
<circle cx="444" cy="536.3" r="13.3" fill="#0a0a12"/>
<circle cx="444" cy="536.3" r="10.8" fill="#e3b72e"/>
<circle cx="444" cy="536.3" r="9.200000000000001" fill="none" stroke="#5a4a10" stroke-width="0.8" stroke-dasharray="2 1.5"/>
<circle cx="444" cy="536.3" r="3.8" fill="#050810"/>
<circle cx="444" cy="564" r="13.3" fill="#0a0a12"/>
<rect x="432" y="552.5" width="24" height="23" fill="#0a0a12"/>
<rect x="433.5" y="554" width="21" height="20" fill="#e3b72e" stroke="#f5e08a" stroke-width="0.8"/>
<circle cx="444" cy="564" r="3.8" fill="#050810"/>
<rect x="413.9" y="654.6" width="51.60000000000002" height="59.5" fill="none" stroke="#d4368c" stroke-width="1.2"/>
<circle cx="444" cy="684" r="25.5" fill="none" stroke="#d08a6a" stroke-width="1" stroke-dasharray="1.5 1"/>
<path d="M463 664 V691" stroke="#f2eda1" stroke-width="1.2"/>
<ellipse cx="444" cy="670.9" rx="12" ry="8.6" fill="#0a0a12"/>
<ellipse cx="444" cy="683.7" rx="12" ry="8.6" fill="#0a0a12"/>
<rect x="432" y="688.4" width="24" height="17.2" rx="3" fill="#0a0a12"/>
<ellipse cx="444" cy="670.9" rx="9.5" ry="6.3" fill="#e3b72e" stroke="#f5e08a" stroke-width="0.7"/>
<circle cx="444" cy="670.9" r="3.8" fill="#050810"/>
<ellipse cx="444" cy="683.7" rx="9.5" ry="6.3" fill="#e3b72e" stroke="#f5e08a" stroke-width="0.7"/>
<circle cx="444" cy="683.7" r="3.8" fill="#050810"/>
<rect x="434.5" y="690.7" width="19" height="12.6" fill="#e3b72e" stroke="#f5e08a" stroke-width="0.7"/>
<circle cx="444" cy="697" r="3.8" fill="#050810"/>
<rect x="576.4" y="654.6" width="51.60000000000002" height="59.5" fill="none" stroke="#d4368c" stroke-width="1.2"/>
<circle cx="605.6" cy="684" r="25.5" fill="none" stroke="#d08a6a" stroke-width="1" stroke-dasharray="1.5 1"/>
<path d="M624.6 664 V691" stroke="#f2eda1" stroke-width="1.2"/>
<ellipse cx="605.6" cy="670.9" rx="12" ry="8.6" fill="#0a0a12"/>
<ellipse cx="605.6" cy="683.7" rx="12" ry="8.6" fill="#0a0a12"/>
<rect x="593.6" y="688.4" width="24" height="17.2" rx="3" fill="#0a0a12"/>
<ellipse cx="605.6" cy="670.9" rx="9.5" ry="6.3" fill="#e3b72e" stroke="#f5e08a" stroke-width="0.7"/>
<circle cx="605.6" cy="670.9" r="3.8" fill="#050810"/>
<ellipse cx="605.6" cy="683.7" rx="9.5" ry="6.3" fill="#e3b72e" stroke="#f5e08a" stroke-width="0.7"/>
<circle cx="605.6" cy="683.7" r="3.8" fill="#050810"/>
<rect x="596.1" y="690.7" width="19" height="12.6" fill="#e3b72e" stroke="#f5e08a" stroke-width="0.7"/>
<circle cx="605.6" cy="697" r="3.8" fill="#050810"/>
<path d="M444 647 V665" fill="none" stroke="#d83232" stroke-width="1.6"/>
<text x="259.4" y="241.3" text-anchor="middle" font-family="Liberation Sans" font-size="17.5" fill="#eeaa7a" stroke="#eeaa7a" stroke-width="0.25" textLength="18.80000000000001" lengthAdjust="spacingAndGlyphs">H1</text>
<text x="260.0" y="333.2" text-anchor="middle" font-family="Liberation Sans" font-size="16" fill="#c47c6e" stroke="#c47c6e" stroke-width="0.4" textLength="107.20000000000002" lengthAdjust="spacingAndGlyphs">MountingHole</text>
<text x="259.85" y="676.5" text-anchor="middle" font-family="Liberation Sans" font-size="17.5" fill="#d8926c" stroke="#d8926c" stroke-width="0.25" textLength="22.30000000000001" lengthAdjust="spacingAndGlyphs">H4</text>
<text x="259.4" y="766.5" text-anchor="middle" font-family="Liberation Sans" font-size="16" fill="#c47c6e" stroke="#c47c6e" stroke-width="0.4" textLength="107.19999999999999" lengthAdjust="spacingAndGlyphs">MountingHole</text>
<text x="1018.8" y="675" text-anchor="middle" font-family="Liberation Sans" font-size="17.5" fill="#d8926c" stroke="#d8926c" stroke-width="0.25" textLength="19.59999999999991" lengthAdjust="spacingAndGlyphs">H3</text>
<text x="1018.4" y="765.4" text-anchor="middle" font-family="Liberation Sans" font-size="16" fill="#c47c6e" stroke="#c47c6e" stroke-width="0.4" textLength="107.20000000000005" lengthAdjust="spacingAndGlyphs">MountingHole</text>
<text transform="translate(261,403.5) rotate(-90)" text-anchor="middle" font-family="Liberation Sans" font-size="17.5" fill="#d8926c" stroke="#d8926c" stroke-width="0.25" textLength="31" lengthAdjust="spacingAndGlyphs">330</text>
<text transform="translate(287,402.75) rotate(-90)" text-anchor="middle" font-family="Liberation Sans" font-size="17.5" fill="#c47c6e" stroke="#c47c6e" stroke-width="0.25" textLength="19.5" lengthAdjust="spacingAndGlyphs">R4</text>
<text transform="translate(312.5,402.75) rotate(-90)" text-anchor="middle" font-family="Liberation Sans" font-size="17.5" fill="#d8926c" stroke="#d8926c" stroke-width="0.25" textLength="19.5" lengthAdjust="spacingAndGlyphs">R4</text>
<text transform="translate(424,403.5) rotate(-90)" text-anchor="middle" font-family="Liberation Sans" font-size="17.5" fill="#d8926c" stroke="#d8926c" stroke-width="0.25" textLength="31" lengthAdjust="spacingAndGlyphs">47k</text>
<text transform="translate(450,402.75) rotate(-90)" text-anchor="middle" font-family="Liberation Sans" font-size="17.5" fill="#c47c6e" stroke="#c47c6e" stroke-width="0.25" textLength="19.5" lengthAdjust="spacingAndGlyphs">R3</text>
<text transform="translate(244.6,550.45) rotate(-90)" text-anchor="middle" font-family="Liberation Sans" font-size="17.5" fill="#d8926c" stroke="#d8926c" stroke-width="0.25" textLength="19.699999999999932" lengthAdjust="spacingAndGlyphs">D2</text>
<text transform="translate(330.4,549.9) rotate(-90)" text-anchor="middle" font-family="Liberation Sans" font-size="17.5" fill="#d8b8a8" stroke="#d8b8a8" stroke-width="0.25" textLength="27.799999999999955" lengthAdjust="spacingAndGlyphs">LED</text>
<text transform="translate(402.4,550.45) rotate(-90)" text-anchor="middle" font-family="Liberation Sans" font-size="17.5" fill="#e8c080" stroke="#e8c080" stroke-width="0.25" textLength="19.699999999999932" lengthAdjust="spacingAndGlyphs">C2</text>
<text transform="translate(411.3,684.35) rotate(-90)" text-anchor="middle" font-family="Liberation Sans" font-size="17.5" fill="#d8926c" stroke="#d8926c" stroke-width="0.25" textLength="19.299999999999955" lengthAdjust="spacingAndGlyphs">Q2</text>
<text transform="translate(573.3,684.3) rotate(-90)" text-anchor="middle" font-family="Liberation Sans" font-size="17.5" fill="#d8926c" stroke="#d8926c" stroke-width="0.25" textLength="19.399999999999977" lengthAdjust="spacingAndGlyphs">Q1</text>
<text transform="translate(479.6,684.0) rotate(-90)" text-anchor="middle" font-family="Liberation Sans" font-size="17.5" fill="#d8a898" stroke="#d8a898" stroke-width="0.25" textLength="62.59999999999991" lengthAdjust="spacingAndGlyphs">2N3904</text>
<text transform="translate(642,684.5) rotate(-90)" text-anchor="middle" font-family="Liberation Sans" font-size="17.5" fill="#d8a898" stroke="#d8a898" stroke-width="0.25" textLength="63" lengthAdjust="spacingAndGlyphs">2N3904</text>
<text transform="translate(668.7,740.7) scale(-1,1)" text-anchor="middle" font-family="Liberation Sans" font-size="18" font-weight="bold" fill="#a2566c" textLength="55" lengthAdjust="spacingAndGlyphs">Battery</text>
<path d="M1100 452.3 H1155.5 V554.5 H1100" fill="none" stroke="#e020e0" stroke-width="1.3"/>
<path d="M1100 497.4 H1152.7 V551.4 H1100" fill="none" stroke="#b8b8b8" stroke-width="1"/>
<text transform="translate(1169.4,502.25) rotate(-90)" text-anchor="middle" font-family="Liberation Sans" font-size="17.5" fill="#c8c8c8" stroke="#c8c8c8" stroke-width="0.25" textLength="70.5" lengthAdjust="spacingAndGlyphs">SW_SPDT</text>
<rect x="1295.7" y="621" width="19" height="1.2" fill="#ffffff"/>
<use href="#grid" opacity="0.16"/>
</svg>
<style>
.lr{position:absolute;left:1355px;width:180px;height:22.6px}
.lr .sw{position:absolute;left:20px;top:4px;width:20px;height:16.5px}
.lr .ey{position:absolute;left:45px;top:3px}
.lr .nm{position:absolute;left:67px;top:3px;font-size:17px;color:#cdc9c4;white-space:nowrap}
.sf{position:absolute;width:16px;height:16px;border-radius:3px;background:#3584e4}
.sft{position:absolute;font-size:17px;color:#d6d3cf;white-space:nowrap}
</style>
<div class="a" style="left:1349px;top:141px;width:187px;height:718px;background:#dedddc"></div>
<div class="a" style="left:1349px;top:141px;width:5px;height:539px;background:#d9d8d7"></div>
<div class="a" style="left:1354px;top:141px;width:182px;height:16px;background:#bbbbbb"></div>
<div class="a" style="left:1357px;top:140px;font-size:14.5px;color:#2e3436">Appearance</div>
<div class="a" style="left:1354px;top:157px;width:182px;height:6px;background:#dedddc"></div>
<div class="a" style="left:1355px;top:163px;width:180px;height:37px;background:#f8f8f7;border-bottom:1px solid #d8d6d3"></div>
<div class="a" style="left:1378px;top:163px;width:132px;height:36px;background:#e8e7e6;border-left:1px solid #dcdad7;border-right:1px solid #dcdad7"></div>
<div class="a" style="left:1378px;top:196px;width:132px;height:3px;background:#3584e4"></div>
<div class="a" style="left:1446px;top:172px;font-size:17px;color:#cfcbc7">Layers</div>
<svg class="a" style="left:1362px;top:174px" width="10" height="14"><path d="M8 1 L2 7 L8 13 Z" fill="#cfcbc7"/></svg>
<svg class="a" style="left:1517px;top:174px" width="10" height="14"><path d="M2 1 L8 7 L2 13 Z" fill="#cfcbc7"/></svg>
<div class="a" style="left:1355px;top:200px;width:180px;height:312px;background:#efeeed"></div>
<div class="a" style="left:1355px;top:200px;width:180px;height:22px;background:#fdfdfd"></div>
<svg class="a" style="left:1361px;top:203px" width="10" height="14"><path d="M1 1 L8 7 L1 13 Z" fill="#a0a0ff"/></svg>

<div class="lr" style="top:200.0px;overflow:hidden"><div class="sw" style="background-color:#e49a9a;"></div><div class="ey"><svg width="17" height="17" viewBox="0 0 17 17"><circle cx="8.5" cy="8.5" r="8" fill="#9a9a9a"/><path d="M2.5 8.5 Q8.5 2.5 14.5 8.5 Q8.5 14.5 2.5 8.5 Z" fill="#eee"/><circle cx="8.5" cy="8.5" r="2.5" fill="#9a9a9a"/><circle cx="8.5" cy="8.5" r="1.2" fill="#eee"/></svg></div><div class="nm">F.Cu</div></div>
<div class="lr" style="top:222.6px;overflow:hidden"><div class="sw" style="background-color:#9cb4d8;"></div><div class="ey"><svg width="17" height="17" viewBox="0 0 17 17"><circle cx="8.5" cy="8.5" r="8" fill="#9a9a9a"/><path d="M2.5 8.5 Q8.5 2.5 14.5 8.5 Q8.5 14.5 2.5 8.5 Z" fill="#eee"/><circle cx="8.5" cy="8.5" r="2.5" fill="#9a9a9a"/><circle cx="8.5" cy="8.5" r="1.2" fill="#eee"/></svg></div><div class="nm">B.Cu</div></div>
<div class="lr" style="top:245.2px;overflow:hidden"><div class="sw" style="background-color:#b878b8;"></div><div class="ey"><svg width="17" height="17" viewBox="0 0 17 17"><circle cx="8.5" cy="8.5" r="8" fill="#9a9a9a"/><path d="M2.5 8.5 Q8.5 2.5 14.5 8.5 Q8.5 14.5 2.5 8.5 Z" fill="#eee"/><circle cx="8.5" cy="8.5" r="2.5" fill="#9a9a9a"/><circle cx="8.5" cy="8.5" r="1.2" fill="#eee"/></svg></div><div class="nm">F.Adhesive</div></div>
<div class="lr" style="top:267.8px;overflow:hidden"><div class="sw" style="background-color:#7878b8;"></div><div class="ey"><svg width="17" height="17" viewBox="0 0 17 17"><circle cx="8.5" cy="8.5" r="8" fill="#9a9a9a"/><path d="M2.5 8.5 Q8.5 2.5 14.5 8.5 Q8.5 14.5 2.5 8.5 Z" fill="#eee"/><circle cx="8.5" cy="8.5" r="2.5" fill="#9a9a9a"/><circle cx="8.5" cy="8.5" r="1.2" fill="#eee"/></svg></div><div class="nm">B.Adhesive</div></div>
<div class="lr" style="top:290.4px;overflow:hidden"><div class="sw" style="background-color:#c8bfba;"></div><div class="ey"><svg width="17" height="17" viewBox="0 0 17 17"><circle cx="8.5" cy="8.5" r="8" fill="#9a9a9a"/><path d="M2.5 8.5 Q8.5 2.5 14.5 8.5 Q8.5 14.5 2.5 8.5 Z" fill="#eee"/><circle cx="8.5" cy="8.5" r="2.5" fill="#9a9a9a"/><circle cx="8.5" cy="8.5" r="1.2" fill="#eee"/></svg></div><div class="nm">F.Paste</div></div>
<div class="lr" style="top:313.0px;overflow:hidden"><div class="sw" style="background-color:#78d0ce;"></div><div class="ey"><svg width="17" height="17" viewBox="0 0 17 17"><circle cx="8.5" cy="8.5" r="8" fill="#9a9a9a"/><path d="M2.5 8.5 Q8.5 2.5 14.5 8.5 Q8.5 14.5 2.5 8.5 Z" fill="#eee"/><circle cx="8.5" cy="8.5" r="2.5" fill="#9a9a9a"/><circle cx="8.5" cy="8.5" r="1.2" fill="#eee"/></svg></div><div class="nm">B.Paste</div></div>
<div class="lr" style="top:335.6px;overflow:hidden"><div class="sw" style="background-color:#f2ecc5;"></div><div class="ey"><svg width="17" height="17" viewBox="0 0 17 17"><circle cx="8.5" cy="8.5" r="8" fill="#9a9a9a"/><path d="M2.5 8.5 Q8.5 2.5 14.5 8.5 Q8.5 14.5 2.5 8.5 Z" fill="#eee"/><circle cx="8.5" cy="8.5" r="2.5" fill="#9a9a9a"/><circle cx="8.5" cy="8.5" r="1.2" fill="#eee"/></svg></div><div class="nm">F.Silkscreen</div></div>
<div class="lr" style="top:358.2px;overflow:hidden"><div class="sw" style="background-color:#efd0c8;"></div><div class="ey"><svg width="17" height="17" viewBox="0 0 17 17"><circle cx="8.5" cy="8.5" r="8" fill="#9a9a9a"/><path d="M2.5 8.5 Q8.5 2.5 14.5 8.5 Q8.5 14.5 2.5 8.5 Z" fill="#eee"/><circle cx="8.5" cy="8.5" r="2.5" fill="#9a9a9a"/><circle cx="8.5" cy="8.5" r="1.2" fill="#eee"/></svg></div><div class="nm">B.Silkscreen</div></div>
<div class="lr" style="top:380.8px;overflow:hidden"><div class="sw" style="background-color:#a888b0;background-image:linear-gradient(45deg, rgba(255,255,255,0.12) 25%, transparent 25%, transparent 75%, rgba(255,255,255,0.12) 75%),linear-gradient(45deg, rgba(255,255,255,0.12) 25%, transparent 25%, transparent 75%, rgba(255,255,255,0.12) 75%);background-size:10px 8px;background-position:0 0,5px 4px;"></div><div class="ey"><svg width="17" height="17" viewBox="0 0 17 17"><circle cx="8.5" cy="8.5" r="8" fill="#9a9a9a"/><path d="M2.5 8.5 Q8.5 2.5 14.5 8.5 Q8.5 14.5 2.5 8.5 Z" fill="#eee"/><circle cx="8.5" cy="8.5" r="2.5" fill="#9a9a9a"/><circle cx="8.5" cy="8.5" r="1.2" fill="#eee"/></svg></div><div class="nm">F.Mask</div></div>
<div class="lr" style="top:403.4px;overflow:hidden"><div class="sw" style="background-color:#6aa8a0;background-image:linear-gradient(45deg, rgba(255,255,255,0.12) 25%, transparent 25%, transparent 75%, rgba(255,255,255,0.12) 75%),linear-gradient(45deg, rgba(255,255,255,0.12) 25%, transparent 25%, transparent 75%, rgba(255,255,255,0.12) 75%);background-size:10px 8px;background-position:0 0,5px 4px;"></div><div class="ey"><svg width="17" height="17" viewBox="0 0 17 17"><circle cx="8.5" cy="8.5" r="8" fill="#9a9a9a"/><path d="M2.5 8.5 Q8.5 2.5 14.5 8.5 Q8.5 14.5 2.5 8.5 Z" fill="#eee"/><circle cx="8.5" cy="8.5" r="2.5" fill="#9a9a9a"/><circle cx="8.5" cy="8.5" r="1.2" fill="#eee"/></svg></div><div class="nm">B.Mask</div></div>
<div class="lr" style="top:426.0px;overflow:hidden"><div class="sw" style="background-color:#d8d8d8;"></div><div class="ey"><svg width="17" height="17" viewBox="0 0 17 17"><circle cx="8.5" cy="8.5" r="8" fill="#9a9a9a"/><path d="M2.5 8.5 Q8.5 2.5 14.5 8.5 Q8.5 14.5 2.5 8.5 Z" fill="#eee"/><circle cx="8.5" cy="8.5" r="2.5" fill="#9a9a9a"/><circle cx="8.5" cy="8.5" r="1.2" fill="#eee"/></svg></div><div class="nm">User.Drawings</div></div>
<div class="lr" style="top:448.6px;overflow:hidden"><div class="sw" style="background-color:#a4c0e8;"></div><div class="ey"><svg width="17" height="17" viewBox="0 0 17 17"><circle cx="8.5" cy="8.5" r="8" fill="#9a9a9a"/><path d="M2.5 8.5 Q8.5 2.5 14.5 8.5 Q8.5 14.5 2.5 8.5 Z" fill="#eee"/><circle cx="8.5" cy="8.5" r="2.5" fill="#9a9a9a"/><circle cx="8.5" cy="8.5" r="1.2" fill="#eee"/></svg></div><div class="nm">User.Comments</div></div>
<div class="lr" style="top:471.2px;overflow:hidden"><div class="sw" style="background-color:#cfe4dc;"></div><div class="ey"><svg width="17" height="17" viewBox="0 0 17 17"><circle cx="8.5" cy="8.5" r="8" fill="#9a9a9a"/><path d="M2.5 8.5 Q8.5 2.5 14.5 8.5 Q8.5 14.5 2.5 8.5 Z" fill="#eee"/><circle cx="8.5" cy="8.5" r="2.5" fill="#9a9a9a"/><circle cx="8.5" cy="8.5" r="1.2" fill="#eee"/></svg></div><div class="nm">User.Eco1</div></div>
<div class="lr" style="top:493.8px;overflow:hidden"><div class="sw" style="background-color:#e4dc9c;"></div><div class="ey"><svg width="17" height="17" viewBox="0 0 17 17"><circle cx="8.5" cy="8.5" r="8" fill="#9a9a9a"/><path d="M2.5 8.5 Q8.5 2.5 14.5 8.5 Q8.5 14.5 2.5 8.5 Z" fill="#eee"/><circle cx="8.5" cy="8.5" r="2.5" fill="#9a9a9a"/><circle cx="8.5" cy="8.5" r="1.2" fill="#eee"/></svg></div><div class="nm">User.Eco2</div></div>
<div class="a" style="left:1355px;top:512px;width:180px;height:29px;background:#fafafa"></div>
<svg class="a" style="left:1368px;top:519px" width="8" height="14"><path d="M1 1 L7 7 L1 13 Z" fill="#777"/></svg>
<div class="a" style="left:1379px;top:519px;font-size:17px;color:#7a7a7a;white-space:nowrap;width:156px;overflow:hidden">Layer Display Options</div>
<div class="a" style="left:1361px;top:551px;font-size:17px;color:#d3d0cc;white-space:nowrap">Presets (Ctrl+Tab):</div>
<div class="a" style="left:1362px;top:573px;width:165px;height:34px;background:#f8f7f6;border-radius:4px"></div>
<div class="a" style="left:1372px;top:582px;font-size:17px;color:#cbc7c3">All Layers</div>
<svg class="a" style="left:1504px;top:586px" width="14" height="8"><path d="M1 1 H13 L7 7 Z" fill="#cbc7c3"/></svg>
<div class="a" style="left:1361px;top:614px;font-size:17px;color:#d3d0cc;white-space:nowrap">Viewports (Shift+Tab):</div>
<div class="a" style="left:1362px;top:636px;width:165px;height:34px;background:#f8f7f6;border-radius:4px"></div>
<div class="a" style="left:1372px;top:645px;font-size:17px;color:#cbc7c3">---</div>
<svg class="a" style="left:1504px;top:649px" width="14" height="8"><path d="M1 1 H13 L7 7 Z" fill="#cbc7c3"/></svg>
<div class="a" style="left:1354px;top:685px;width:182px;height:16px;background:#bbbbbb"></div>
<div class="a" style="left:1357px;top:683px;font-size:14.5px;color:#2e3436">Selection Filter</div>
<div class="a" style="left:1349px;top:701px;width:5px;height:158px;background:#d9d8d7"></div>

<div class="sf" style="left:1363px;top:710.0px"><svg width="16" height="16" style="position:absolute;left:0;top:0"><path d="M3.5 8 L6.5 11 L12.5 5" stroke="#fff" stroke-width="2" fill="none"/></svg></div><div class="sft" style="left:1383px;top:710.0px">All items</div>
<div class="sf" style="left:1486px;top:710.0px;background:#fff;border:1px solid #d0ccc8"></div>
<div class="sft" style="left:1506px;top:710.0px;width:30px;overflow:hidden">Locked items</div>
<div class="sf" style="left:1363px;top:734.7px"><svg width="16" height="16" style="position:absolute;left:0;top:0"><path d="M3.5 8 L6.5 11 L12.5 5" stroke="#fff" stroke-width="2" fill="none"/></svg></div><div class="sft" style="left:1383px;top:734.7px">Footprints</div>
<div class="sf" style="left:1486px;top:734.7px"><svg width="16" height="16" style="position:absolute;left:0;top:0"><path d="M3.5 8 L6.5 11 L12.5 5" stroke="#fff" stroke-width="2" fill="none"/></svg></div>
<div class="sft" style="left:1506px;top:734.7px;width:30px;overflow:hidden">Text</div>
<div class="sf" style="left:1363px;top:759.4px"><svg width="16" height="16" style="position:absolute;left:0;top:0"><path d="M3.5 8 L6.5 11 L12.5 5" stroke="#fff" stroke-width="2" fill="none"/></svg></div><div class="sft" style="left:1383px;top:759.4px">Tracks</div>
<div class="sf" style="left:1486px;top:759.4px"><svg width="16" height="16" style="position:absolute;left:0;top:0"><path d="M3.5 8 L6.5 11 L12.5 5" stroke="#fff" stroke-width="2" fill="none"/></svg></div>
<div class="sft" style="left:1506px;top:759.4px;width:30px;overflow:hidden">Vias</div>
<div class="sf" style="left:1363px;top:784.1px"><svg width="16" height="16" style="position:absolute;left:0;top:0"><path d="M3.5 8 L6.5 11 L12.5 5" stroke="#fff" stroke-width="2" fill="none"/></svg></div><div class="sft" style="left:1383px;top:784.1px">Pads</div>
<div class="sf" style="left:1486px;top:784.1px"><svg width="16" height="16" style="position:absolute;left:0;top:0"><path d="M3.5 8 L6.5 11 L12.5 5" stroke="#fff" stroke-width="2" fill="none"/></svg></div>
<div class="sft" style="left:1506px;top:784.1px;width:30px;overflow:hidden">Graphics</div>
<div class="sf" style="left:1363px;top:808.8px"><svg width="16" height="16" style="position:absolute;left:0;top:0"><path d="M3.5 8 L6.5 11 L12.5 5" stroke="#fff" stroke-width="2" fill="none"/></svg></div><div class="sft" style="left:1383px;top:808.8px">Zones</div>
<div class="sf" style="left:1486px;top:808.8px"><svg width="16" height="16" style="position:absolute;left:0;top:0"><path d="M3.5 8 L6.5 11 L12.5 5" stroke="#fff" stroke-width="2" fill="none"/></svg></div>
<div class="sft" style="left:1506px;top:808.8px;width:30px;overflow:hidden">Rule Areas</div>
<div class="sf" style="left:1363px;top:833.5px"><svg width="16" height="16" style="position:absolute;left:0;top:0"><path d="M3.5 8 L6.5 11 L12.5 5" stroke="#fff" stroke-width="2" fill="none"/></svg></div><div class="sft" style="left:1383px;top:833.5px">Dimensions</div>
<div class="sf" style="left:1486px;top:833.5px"><svg width="16" height="16" style="position:absolute;left:0;top:0"><path d="M3.5 8 L6.5 11 L12.5 5" stroke="#fff" stroke-width="2" fill="none"/></svg></div>
<div class="sft" style="left:1506px;top:833.5px;width:30px;overflow:hidden">Other items</div>
<div class="a" style="left:1535px;top:141px;width:1px;height:718px;background:#efeeed"></div>
<style>
#dlg{left:451px;top:178px;width:654px;height:470px;background:#f6f5f4;border-radius:7px 7px 0 0;overflow:hidden;box-shadow:inset 0 1px 0 #dcd8d4}
#dlg .lb{position:absolute;font-size:17px;color:#9a9a9a;white-space:nowrap}
#dlg .in{position:absolute;background:#fdfdfc;border:1px solid #d6d1cc;border-radius:5px}
#dlg .in span{position:absolute;left:8px;top:7px;font-size:17px;color:#3d3d3d}
#dlg .mm{position:absolute;font-size:17px;color:#9a9a9a}
#dlg .chk{position:absolute;width:16px;height:16px;background:#fff;border:1px solid #cdc7c2;border-radius:3px}
#dlg .btn{position:absolute;background:#f6f5f4;border:1px solid #ddd9d5;border-radius:5px;font-size:17px;color:#9a9a9a;text-align:center}
#dlg .tb{position:absolute;background:#c8dcf5;border:1px solid #62a0ea;border-radius:2px}
</style>
<div id="dlg" class="a">
<div class="a" style="left:0;top:0;width:654px;height:36px;text-align:center;font-weight:bold;font-size:17px;color:#8a8d8e;padding-top:10px;letter-spacing:0.4px">Text Properties</div>
<svg class="a" style="left:631px;top:13px" width="11" height="11"><path d="M1.5 1.5 L9.5 9.5 M9.5 1.5 L1.5 9.5" stroke="#95989a" stroke-width="2.1"/></svg>
<div class="a" style="left:0;top:35px;width:654px;height:1px;background:#e0dcd8"></div>
<div class="lb" style="left:15px;top:49px">Text:</div>
<div class="a" style="left:15px;top:69px;width:624px;height:98px;background:#fff;border:1px solid #cdc7c2;border-radius:3px;overflow:hidden">
<div class="a" style="right:0;top:0;width:80px;height:98px;background:radial-gradient(ellipse 60px 60px at 100% 50%, rgba(0,0,0,0.06), rgba(0,0,0,0))"></div>
<div class="a" style="left:0px;top:2px;font-family:'Liberation Mono',monospace;font-size:18px;line-height:23.5px;color:#111;white-space:pre">LED Blinky v0.1
Hussam Al-Hertani</div></div>
<div class="chk" style="left:19px;top:187px"></div>
<div class="lb" style="left:38px;top:186px">Locked</div>
<div class="lb" style="left:15px;top:230px">Layer:</div>
<div class="in" style="left:102px;top:221px;width:234px;height:36px;background:#f8f7f6"><div class="a" style="left:9px;top:10px;width:14px;height:14px;background:#f2eda1;border:1px solid #555"></div><span style="left:25px;top:9px;color:#9a9a9a">F.Silkscreen</span><div class="a" style="left:210px;top:15px;border-left:6px solid transparent;border-right:6px solid transparent;border-top:6px solid #888"></div></div>
<div class="chk" style="left:365px;top:230px"></div>
<div class="lb" style="left:385px;top:230px">Knockout</div>
<div class="lb" style="left:15px;top:284px">Font:</div>
<div class="in" style="left:102px;top:274px;width:234px;height:36px;background:#f8f7f6"><span style="left:12px;top:9px;color:#9a9a9a">KiCad Font</span><div class="a" style="left:210px;top:15px;border-left:6px solid transparent;border-right:6px solid transparent;border-top:6px solid #888"></div></div>
<div class="lb" style="left:15px;top:325px">Width:</div>
<div class="in" style="left:102px;top:317px;width:146px;height:34px"><span>1</span></div>
<div class="mm" style="left:251px;top:325px">mm</div>
<div class="lb" style="left:15px;top:360px">Height:</div>
<div class="in" style="left:102px;top:352px;width:146px;height:34px"><span>1</span></div>
<div class="mm" style="left:251px;top:360px">mm</div>
<div class="lb" style="left:14px;top:396px">Thickness:</div>
<div class="in" style="left:102px;top:388px;width:146px;height:34px"><span>0.25</span></div>
<div class="mm" style="left:251px;top:396px">mm</div>
<div class="lb" style="left:362px;top:325px">Position X:</div>
<div class="in" style="left:463px;top:317px;width:146px;height:34px"><span>254.3</span></div>
<div class="mm" style="left:612px;top:325px">mm</div>
<div class="lb" style="left:362px;top:360px">Position Y:</div>
<div class="in" style="left:463px;top:352px;width:146px;height:34px"><span>86.4</span></div>
<div class="mm" style="left:612px;top:360px">mm</div>
<div class="lb" style="left:362px;top:396px">Orientation:</div>
<div class="in" style="left:463px;top:388px;width:146px;height:34px;overflow:hidden"><span>0</span><div class="a" style="left:110px;top:0;width:34px;height:32px;border-left:1px solid #d6d1cc;background:#f6f5f4;border-radius:0 5px 5px 0"></div><div class="a" style="left:121px;top:13px;border-left:6px solid transparent;border-right:6px solid transparent;border-top:6px solid #888"></div></div>
<div class="btn" style="left:469px;top:431px;width:83px;height:34px;padding-top:7px">Cancel</div>
<div class="btn" style="left:558px;top:431px;width:84px;height:34px;padding-top:7px">OK</div>

<div class="tb" style="left:361px;top:278px;width:26px;height:26px"></div>
<div class="a" style="left:367px;top:281px;font-weight:bold;font-size:17px;color:#333">B</div>
<svg class="a" style="left:393px;top:283px" width="12" height="20"><path d="M7.5 3 L4.5 16" stroke="#333" stroke-width="2.2"/></svg>
<div class="a" style="left:418px;top:279px;width:1px;height:26px;background:#999"></div>
<div class="tb" style="left:421px;top:278px;width:27px;height:26px"></div>
<svg class="a" style="left:421px;top:278px" width="120" height="26">
<path d="M7 8 H20 M7 11 H16 M7 14 H20 M7 17 H16" stroke="#555" stroke-width="1.3"/>
<path d="M453 0" />
<path d="M33 8 H46 M35 11 H44 M33 14 H46 M35 17 H44" stroke="#777" stroke-width="1.3"/>
<path d="M59 8 H72 M63 11 H72 M59 14 H72 M63 17 H72" stroke="#777" stroke-width="1.3"/>
</svg>
<div class="a" style="left:504px;top:279px;width:1px;height:26px;background:#999"></div>
<div class="tb" style="left:560px;top:278px;width:26px;height:26px"></div>
<svg class="a" style="left:510px;top:278px" width="120" height="26">
<path d="M7 7 H17 M7 9 H17 M7 11 H17" stroke="#aaa" stroke-width="0.9"/>
<path d="M32 11.5 H42 M32 13.5 H42 M32 15.5 H42" stroke="#aaa" stroke-width="0.9"/>
<path d="M58 16 H68 M58 18 H68 M58 20 H68" stroke="#8a8f95" stroke-width="0.9"/>
</svg>
<div class="a" style="left:591px;top:279px;width:1px;height:26px;background:#999"></div>
<div class="a" style="left:600px;top:281px;font-size:17px;color:#444;transform:scaleX(-1)">R</div>
</div>

<div id="status" class="a"></div>
<div id="status2" class="a"></div>
<div class="st" style="left:18px;top:862px">Pads</div>
<div class="st" style="left:18px;top:885px">37</div>
<div class="st" style="left:98px;top:862px">Vias</div>
<div class="st" style="left:98px;top:885px">0</div>
<div class="st" style="left:172px;top:862px">Track Segments</div>
<div class="st" style="left:172px;top:885px">38</div>
<div class="st" style="left:342px;top:862px">Nets</div>
<div class="st" style="left:342px;top:885px">10</div>
<div class="st" style="left:422px;top:862px">Unrouted</div>
<div class="st" style="left:422px;top:885px">0</div>
<div class="st" style="left:8px;top:912px">Z 3.07</div>
<div class="st" style="left:118px;top:912px;letter-spacing:0.5px">X 254.3000&nbsp; Y 86.4000</div>
<div class="st" style="left:351px;top:912px;letter-spacing:0.33px">dx 78.5000&nbsp; dy 15.1000&nbsp; dist 79.9391</div>
<div class="st" style="left:723px;top:912px">grid 0.1000</div>
<div class="st" style="left:991px;top:912px">mm</div>
<div class="st" style="left:1074px;top:912px">Add Text</div>

<svg class="a" style="left:1505px;top:905px" width="30" height="28"><path d="M3 27 L27 3 M8 27 L27 8 M13 27 L27 13 M18 27 L27 18 M23 27 L27 23" stroke="#b8b3ae" stroke-width="1.3"/></svg>
<div class="a" style="left:1535px;top:6px;width:1px;height:927px;background:#a4a4a4"></div>
<svg class="a" style="left:0;top:0" width="8" height="8"><path d="M0 0 H8 A8 8 0 0 0 0 8 Z" fill="#c9c9c9"/></svg>
<svg class="a" style="left:1528px;top:0" width="8" height="8"><path d="M8 0 H0 A8 8 0 0 1 8 8 Z" fill="#c9c9c9"/></svg>
</body></html>
